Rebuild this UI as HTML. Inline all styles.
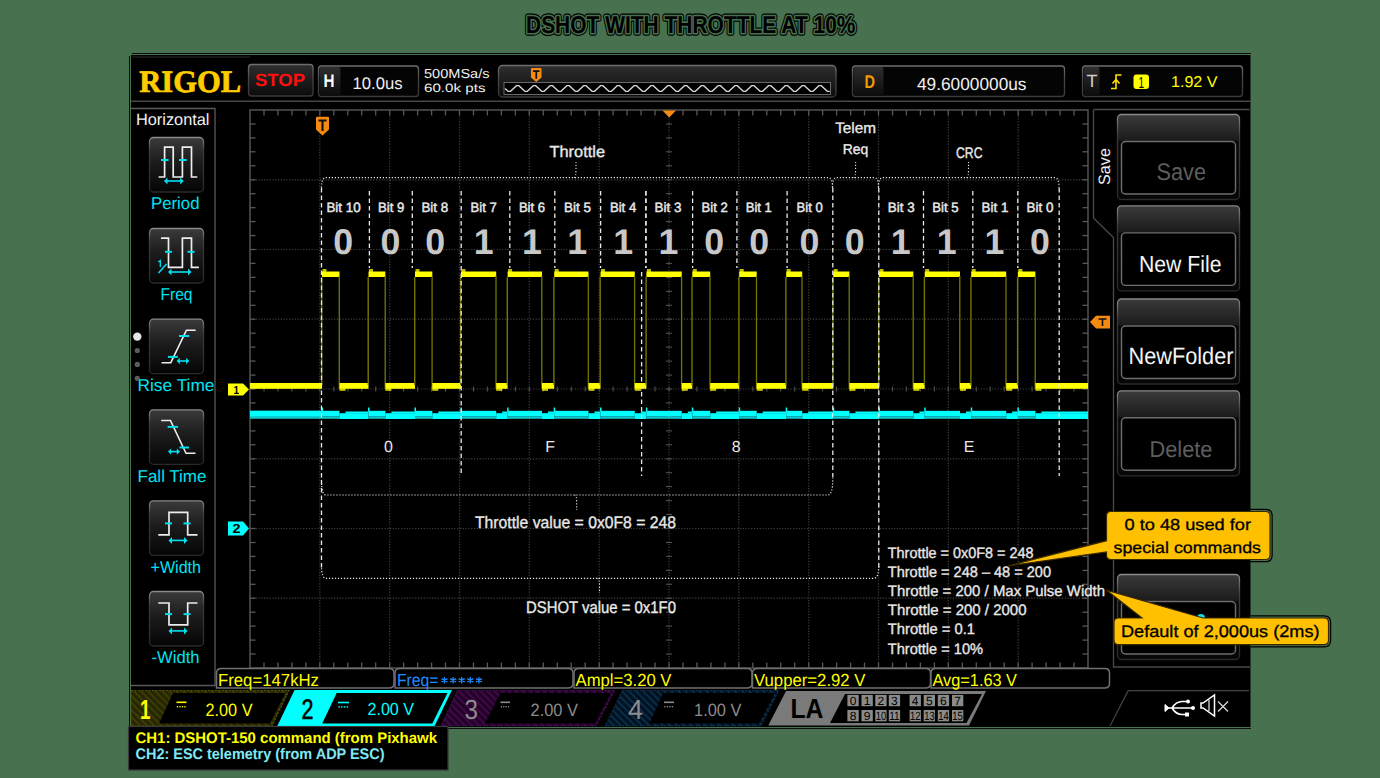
<!DOCTYPE html>
<html><head><meta charset="utf-8"><style>
html,body{margin:0;padding:0;background:#48724F;width:1380px;height:778px;overflow:hidden;}
svg{display:block;position:absolute;left:0;top:0;}
</style></head><body>
<svg width="1380" height="778" viewBox="0 0 1380 778" text-rendering="geometricPrecision">
<defs>
<clipPath id="outside"><rect x="1250.5" y="0" width="130" height="778"/></clipPath>
<linearGradient id="btn" x1="0" y1="0" x2="0" y2="1"><stop offset="0" stop-color="#3a3a3a"/><stop offset="0.45" stop-color="#1c1c1c"/><stop offset="1" stop-color="#050505"/></linearGradient>
<linearGradient id="bar" x1="0" y1="0" x2="0" y2="1"><stop offset="0" stop-color="#2e2e2e"/><stop offset="1" stop-color="#0c0c0c"/></linearGradient>
<linearGradient id="mbtn" x1="0" y1="0" x2="0" y2="1"><stop offset="0" stop-color="#3a3a3a"/><stop offset="0.3" stop-color="#1c1c1c"/><stop offset="0.32" stop-color="#0a0a0a"/><stop offset="1" stop-color="#060606"/></linearGradient>
<linearGradient id="tstroke" x1="0" y1="0" x2="0" y2="1"><stop offset="0" stop-color="#6e6e6e"/><stop offset="0.5" stop-color="#444"/><stop offset="1" stop-color="#3a3a3a"/></linearGradient>
<linearGradient id="mstroke" x1="0" y1="0" x2="0" y2="1"><stop offset="0" stop-color="#8a8a8a"/><stop offset="0.25" stop-color="#3a3a3a"/><stop offset="1" stop-color="#2a2a2a"/></linearGradient>
<pattern id="hatchY" width="5" height="5" patternUnits="userSpaceOnUse" patternTransform="rotate(-45)"><rect width="5" height="5" fill="#262600"/><rect width="1.8" height="5" fill="#3e3e06"/></pattern>
<pattern id="hatchP" width="5" height="5" patternUnits="userSpaceOnUse" patternTransform="rotate(-45)"><rect width="5" height="5" fill="#240028"/><rect width="1.8" height="5" fill="#3e0c48"/></pattern>
<pattern id="hatchB" width="5" height="5" patternUnits="userSpaceOnUse" patternTransform="rotate(-45)"><rect width="5" height="5" fill="#00121f"/><rect width="1.8" height="5" fill="#0a2e4a"/></pattern>
</defs>
<text x="526.00" y="33.00" font-family='"Liberation Sans", sans-serif' font-size="24.27" font-weight="bold" fill="none" textLength="329.50" lengthAdjust="spacingAndGlyphs" stroke="#000" stroke-width="5.4" stroke-linejoin="round">DSHOT WITH THROTTLE AT 10%</text>
<text x="526.00" y="33.00" font-family='"Liberation Sans", sans-serif' font-size="24.27" font-weight="bold" fill="none" textLength="329.50" lengthAdjust="spacingAndGlyphs" stroke="#48724F" stroke-width="3.2" stroke-linejoin="round">DSHOT WITH THROTTLE AT 10%</text>
<text x="526.00" y="33.00" font-family='"Liberation Sans", sans-serif' font-size="24.27" font-weight="bold" fill="#000" textLength="329.50" lengthAdjust="spacingAndGlyphs" >DSHOT WITH THROTTLE AT 10%</text>
<rect x="132" y="53" width="1119" height="1" rx="0" fill="#0a0a0a" />
<rect x="129" y="56" width="1" height="671" rx="0" fill="#0a0a0a" />
<rect x="131" y="55" width="1119.5" height="672" rx="0" fill="#000" />
<rect x="132" y="728" width="1119" height="1" rx="0" fill="#111" />
<rect x="132" y="56.5" width="118" height="1" rx="0" fill="#2a2a2a" />
<rect x="131" y="100.5" width="1120" height="1.5" rx="0" fill="#474747" />
<text x="139.30" y="91.70" font-family='"Liberation Serif", serif' font-size="31.15" font-weight="bold" fill="#FFCC00" textLength="101.90" lengthAdjust="spacingAndGlyphs" stroke="#FFCC00" stroke-width="0.7" >RIGOL</text>
<rect x="248.5" y="64.5" width="64.5" height="31.5" rx="3" fill="url(#bar)" stroke="url(#tstroke)" stroke-width="1.3" />
<text x="255.00" y="86.00" font-family='"Liberation Sans", sans-serif' font-size="17.73" font-weight="bold" fill="#FF1010" textLength="50.00" lengthAdjust="spacingAndGlyphs" >STOP</text>
<rect x="318.5" y="66" width="100" height="30.5" rx="3" fill="#040404" stroke="url(#tstroke)" stroke-width="1.3" />
<rect x="319.5" y="67" width="21" height="28.5" rx="2" fill="url(#bar)" />
<text x="323.50" y="87.20" font-family='"Liberation Sans", sans-serif' font-size="18.02" font-weight="bold" fill="#fff" textLength="11.00" lengthAdjust="spacingAndGlyphs" >H</text>
<text x="352.50" y="88.80" font-family='"Liberation Sans", sans-serif' font-size="16.72" font-weight="normal" fill="#f0f0f0" textLength="50.00" lengthAdjust="spacingAndGlyphs" >10.0us</text>
<text x="424.00" y="78.30" font-family='"Liberation Sans", sans-serif' font-size="13.08" font-weight="normal" fill="#f0f0f0" textLength="65.50" lengthAdjust="spacingAndGlyphs" >500MSa/s</text>
<text x="424.00" y="92.30" font-family='"Liberation Sans", sans-serif' font-size="12.06" font-weight="normal" fill="#f0f0f0" textLength="61.50" lengthAdjust="spacingAndGlyphs" >60.0k pts</text>
<rect x="498.5" y="65.5" width="337.5" height="31.5" rx="4" fill="url(#bar)" stroke="url(#tstroke)" stroke-width="1.3" />
<rect x="504" y="82.5" width="326.5" height="12" rx="0" fill="#000" stroke="#6a6a6a" stroke-width="1" />
<path d="M505.0,88.5 L508.1,91.3 L510.5,91.3 L516.5,85.7 L518.9,85.7 L524.9,91.3 L527.3,91.3 L533.3,85.7 L535.7,85.7 L541.7,91.3 L544.1,91.3 L550.1,85.7 L552.5,85.7 L558.5,91.3 L560.9,91.3 L566.9,85.7 L569.3,85.7 L575.3,91.3 L577.7,91.3 L583.7,85.7 L586.1,85.7 L592.1,91.3 L594.5,91.3 L600.5,85.7 L602.9,85.7 L608.9,91.3 L611.3,91.3 L617.3,85.7 L619.7,85.7 L625.7,91.3 L628.1,91.3 L634.1,85.7 L636.5,85.7 L642.5,91.3 L644.9,91.3 L650.9,85.7 L653.3,85.7 L659.3,91.3 L661.7,91.3 L667.7,85.7 L670.1,85.7 L676.1,91.3 L678.5,91.3 L684.5,85.7 L686.9,85.7 L692.9,91.3 L695.3,91.3 L701.3,85.7 L703.7,85.7 L709.7,91.3 L712.1,91.3 L718.1,85.7 L720.5,85.7 L726.5,91.3 L728.9,91.3 L734.9,85.7 L737.3,85.7 L743.3,91.3 L745.7,91.3 L751.7,85.7 L754.1,85.7 L760.1,91.3 L762.5,91.3 L768.5,85.7 L770.9,85.7 L776.9,91.3 L779.3,91.3 L785.3,85.7 L787.7,85.7 L793.7,91.3 L796.1,91.3 L802.1,85.7 L804.5,85.7 L810.5,91.3 L812.9,91.3 L818.9,85.7 L821.3,85.7 L827.3,91.3 L829.7,91.3" fill="none" stroke="#d8d8d8" stroke-width="1.3" />
<path d="M531,69 Q531,68 532,68 L540.5,68 Q541.5,68 541.5,69 L541.5,77.52 L536.25,82 L531,77.52 Z" fill="#F58A10" />
<path d="M533.00,71.10 L539.50,71.10 M536.25,71.10 L536.25,78.78" fill="none" stroke="#111" stroke-width="1.68" />
<rect x="852.5" y="66" width="212" height="30.5" rx="3" fill="#040404" stroke="url(#tstroke)" stroke-width="1.3" />
<rect x="853.5" y="67" width="30" height="28.5" rx="2" fill="url(#bar)" />
<text x="864.50" y="87.50" font-family='"Liberation Sans", sans-serif' font-size="18.46" font-weight="bold" fill="#F59A00" textLength="10.50" lengthAdjust="spacingAndGlyphs" >D</text>
<text x="917.00" y="89.50" font-family='"Liberation Sans", sans-serif' font-size="17.44" font-weight="normal" fill="#f0f0f0" textLength="109.50" lengthAdjust="spacingAndGlyphs" >49.6000000us</text>
<rect x="1082.5" y="66" width="160" height="30.5" rx="3" fill="#040404" stroke="url(#tstroke)" stroke-width="1.3" />
<rect x="1083.5" y="67" width="16" height="28.5" rx="2" fill="url(#bar)" />
<text x="1086.50" y="87.00" font-family='"Liberation Sans", sans-serif' font-size="17.73" font-weight="normal" fill="#cfcfcf" textLength="11.00" lengthAdjust="spacingAndGlyphs" >T</text>
<path d="M1111,88.5 L1116,88.5 L1116,75 L1121.5,75 M1112.5,83.5 L1116,79.5 L1119.5,83.5" fill="none" stroke="#FFE000" stroke-width="1.6" />
<rect x="1133.5" y="74.5" width="15.5" height="14.5" rx="3" fill="#FFFF00" />
<text x="1138.50" y="87.50" font-family='"Liberation Sans", sans-serif' font-size="15.99" font-weight="normal" fill="#000" textLength="5.50" lengthAdjust="spacingAndGlyphs" >1</text>
<text x="1171.00" y="87.30" font-family='"Liberation Sans", sans-serif' font-size="15.70" font-weight="normal" fill="#FFFF00" textLength="46.50" lengthAdjust="spacingAndGlyphs" >1.92 V</text>
<path d="M131,108.5 L215,108.5 L215,685.5 L131,685.5" fill="none" stroke="#5a5a5a" stroke-width="1.3" />
<text x="136.00" y="125.30" font-family='"Liberation Sans", sans-serif' font-size="16.42" font-weight="normal" fill="#f2f2f2" textLength="73.50" lengthAdjust="spacingAndGlyphs" >Horizontal</text>
<rect x="149.5" y="137.5" width="54" height="54.5" rx="4" fill="url(#btn)" stroke="url(#mstroke)" stroke-width="1.3" />
<text x="151.00" y="209.30" font-family='"Liberation Sans", sans-serif' font-size="17.15" font-weight="normal" fill="#00E4F4" textLength="48.50" lengthAdjust="spacingAndGlyphs" >Period</text>
<rect x="149.5" y="228.5" width="54" height="54.5" rx="4" fill="url(#btn)" stroke="url(#mstroke)" stroke-width="1.3" />
<text x="160.50" y="300.30" font-family='"Liberation Sans", sans-serif' font-size="17.15" font-weight="normal" fill="#00E4F4" textLength="32.00" lengthAdjust="spacingAndGlyphs" >Freq</text>
<rect x="149.5" y="319.2" width="54" height="54.5" rx="4" fill="url(#btn)" stroke="url(#mstroke)" stroke-width="1.3" />
<text x="137.50" y="391.00" font-family='"Liberation Sans", sans-serif' font-size="17.15" font-weight="normal" fill="#00E4F4" textLength="77.00" lengthAdjust="spacingAndGlyphs" >Rise Time</text>
<rect x="149.5" y="409.8" width="54" height="54.5" rx="4" fill="url(#btn)" stroke="url(#mstroke)" stroke-width="1.3" />
<text x="137.50" y="481.60" font-family='"Liberation Sans", sans-serif' font-size="17.15" font-weight="normal" fill="#00E4F4" textLength="69.00" lengthAdjust="spacingAndGlyphs" >Fall Time</text>
<rect x="149.5" y="500.9" width="54" height="54.5" rx="4" fill="url(#btn)" stroke="url(#mstroke)" stroke-width="1.3" />
<text x="150.50" y="572.70" font-family='"Liberation Sans", sans-serif' font-size="17.15" font-weight="normal" fill="#00E4F4" textLength="50.50" lengthAdjust="spacingAndGlyphs" >+Width</text>
<rect x="149.5" y="591.5" width="54" height="54.5" rx="4" fill="url(#btn)" stroke="url(#mstroke)" stroke-width="1.3" />
<text x="151.50" y="663.30" font-family='"Liberation Sans", sans-serif' font-size="17.15" font-weight="normal" fill="#00E4F4" textLength="48.00" lengthAdjust="spacingAndGlyphs" >-Width</text>
<path d="M158.6,177 L164.6,177 L164.6,147.2 L173.2,147.2 L173.2,177 L182.4,177 L182.4,147.2 L191.5,147.2 L191.5,177 L197.3,177" fill="none" stroke="#ededed" stroke-width="1.7" />
<line x1="161" y1="160" x2="168.5" y2="160" stroke="#00E0F0" stroke-width="2" />
<line x1="179" y1="160" x2="186.6" y2="160" stroke="#00E0F0" stroke-width="2" />
<line x1="165.5" y1="181" x2="182.2" y2="181" stroke="#00E0F0" stroke-width="1.6" />
<path d="M164,181 L167.5,177.5 L167.5,184.5 Z" fill="#00E0F0" />
<path d="M183.7,181 L180.2,177.5 L180.2,184.5 Z" fill="#00E0F0" />
<path d="M161,238.2 L168.5,238.2 L168.5,267.4 L182.4,267.4 L182.4,238.2 L191.5,238.2 L191.5,267.4 L198.9,267.4" fill="none" stroke="#ededed" stroke-width="1.7" />
<line x1="165" y1="251.8" x2="172" y2="251.8" stroke="#00E0F0" stroke-width="2" />
<line x1="187.5" y1="251.8" x2="194.5" y2="251.8" stroke="#00E0F0" stroke-width="2" />
<line x1="169.5" y1="272" x2="190.0" y2="272" stroke="#00E0F0" stroke-width="1.6" />
<path d="M168,272 L171.5,268.5 L171.5,275.5 Z" fill="#00E0F0" />
<path d="M191.5,272 L188.0,268.5 L188.0,275.5 Z" fill="#00E0F0" />
<path d="M158.5,273 L166.5,264" fill="none" stroke="#00E0F0" stroke-width="1.5" />
<path d="M158.3,262 L160.3,260.5 L160.3,267" fill="none" stroke="#00E0F0" stroke-width="1.3" />
<path d="M161.6,362.7 L170.8,362.7 L186.4,330.3 L195.7,330.3" fill="none" stroke="#ededed" stroke-width="1.5" />
<line x1="179" y1="336.0" x2="189.3" y2="336.0" stroke="#00E0F0" stroke-width="2" />
<line x1="168" y1="356.9" x2="177.8" y2="356.9" stroke="#00E0F0" stroke-width="2" />
<line x1="178.1" y1="361.0" x2="187.8" y2="361.0" stroke="#00E0F0" stroke-width="1.6" />
<path d="M176.6,361.0 L179.79999999999998,357.8 L179.79999999999998,364.2 Z" fill="#00E0F0" />
<path d="M189.3,361.0 L186.10000000000002,357.8 L186.10000000000002,364.2 Z" fill="#00E0F0" />
<path d="M161.2,420.6 L170.5,420.6 L186,453.3 L195.5,453.3" fill="none" stroke="#ededed" stroke-width="1.5" />
<line x1="167.6" y1="426.90000000000003" x2="178" y2="426.90000000000003" stroke="#00E0F0" stroke-width="2" />
<line x1="179.5" y1="447.5" x2="189" y2="447.5" stroke="#00E0F0" stroke-width="2" />
<line x1="169.5" y1="451.6" x2="178.5" y2="451.6" stroke="#00E0F0" stroke-width="1.6" />
<path d="M168,451.6 L171.2,448.40000000000003 L171.2,454.8 Z" fill="#00E0F0" />
<path d="M180,451.6 L176.8,448.40000000000003 L176.8,454.8 Z" fill="#00E0F0" />
<path d="M158.3,534.9 L169,534.9 L169,512.4 L187.7,512.4 L187.7,534.9 L197.5,534.9" fill="none" stroke="#ededed" stroke-width="1.7" />
<line x1="165" y1="523.4" x2="172" y2="523.4" stroke="#00E0F0" stroke-width="2" />
<line x1="183.5" y1="523.4" x2="190.5" y2="523.4" stroke="#00E0F0" stroke-width="2" />
<line x1="170.0" y1="540.4" x2="186.0" y2="540.4" stroke="#00E0F0" stroke-width="1.6" />
<path d="M168.5,540.4 L172.0,536.9 L172.0,543.9 Z" fill="#00E0F0" />
<path d="M187.5,540.4 L184.0,536.9 L184.0,543.9 Z" fill="#00E0F0" />
<path d="M158.3,603 L169,603 L169,624.8 L187.7,624.8 L187.7,603 L197.5,603" fill="none" stroke="#ededed" stroke-width="1.7" />
<line x1="165" y1="614.1" x2="172" y2="614.1" stroke="#00E0F0" stroke-width="2" />
<line x1="183.5" y1="614.1" x2="190.5" y2="614.1" stroke="#00E0F0" stroke-width="2" />
<line x1="170.0" y1="630.9" x2="186.0" y2="630.9" stroke="#00E0F0" stroke-width="1.6" />
<path d="M168.5,630.9 L172.0,627.4 L172.0,634.4 Z" fill="#00E0F0" />
<path d="M187.5,630.9 L184.0,627.4 L184.0,634.4 Z" fill="#00E0F0" />
<circle cx="137.3" cy="336.6" r="4.2" fill="#e6e6e6"/>
<circle cx="137.3" cy="350.5" r="2.6" fill="#5c5c5c"/>
<circle cx="137.3" cy="364.4" r="2.6" fill="#5c5c5c"/>
<circle cx="137.3" cy="378.3" r="2.6" fill="#5c5c5c"/>
<line x1="319.8" y1="110" x2="319.8" y2="668" stroke="#404040" stroke-width="1.2" stroke-dasharray="1.2 1.6"/>
<line x1="389.7" y1="110" x2="389.7" y2="668" stroke="#404040" stroke-width="1.2" stroke-dasharray="1.2 1.6"/>
<line x1="459.5" y1="110" x2="459.5" y2="668" stroke="#404040" stroke-width="1.2" stroke-dasharray="1.2 1.6"/>
<line x1="529.3" y1="110" x2="529.3" y2="668" stroke="#404040" stroke-width="1.2" stroke-dasharray="1.2 1.6"/>
<line x1="599.2" y1="110" x2="599.2" y2="668" stroke="#404040" stroke-width="1.2" stroke-dasharray="1.2 1.6"/>
<line x1="669.0" y1="110" x2="669.0" y2="668" stroke="#404040" stroke-width="1.2" stroke-dasharray="1.2 1.6"/>
<line x1="738.8" y1="110" x2="738.8" y2="668" stroke="#404040" stroke-width="1.2" stroke-dasharray="1.2 1.6"/>
<line x1="808.7" y1="110" x2="808.7" y2="668" stroke="#404040" stroke-width="1.2" stroke-dasharray="1.2 1.6"/>
<line x1="878.5" y1="110" x2="878.5" y2="668" stroke="#404040" stroke-width="1.2" stroke-dasharray="1.2 1.6"/>
<line x1="948.3" y1="110" x2="948.3" y2="668" stroke="#404040" stroke-width="1.2" stroke-dasharray="1.2 1.6"/>
<line x1="1018.2" y1="110" x2="1018.2" y2="668" stroke="#404040" stroke-width="1.2" stroke-dasharray="1.2 1.6"/>
<line x1="250" y1="179.8" x2="1088" y2="179.8" stroke="#404040" stroke-width="1.2" stroke-dasharray="1.2 1.6"/>
<line x1="250" y1="249.5" x2="1088" y2="249.5" stroke="#404040" stroke-width="1.2" stroke-dasharray="1.2 1.6"/>
<line x1="250" y1="319.2" x2="1088" y2="319.2" stroke="#404040" stroke-width="1.2" stroke-dasharray="1.2 1.6"/>
<line x1="250" y1="389.0" x2="1088" y2="389.0" stroke="#404040" stroke-width="1.2" stroke-dasharray="1.2 1.6"/>
<line x1="250" y1="458.8" x2="1088" y2="458.8" stroke="#404040" stroke-width="1.2" stroke-dasharray="1.2 1.6"/>
<line x1="250" y1="528.5" x2="1088" y2="528.5" stroke="#404040" stroke-width="1.2" stroke-dasharray="1.2 1.6"/>
<line x1="250" y1="598.2" x2="1088" y2="598.2" stroke="#404040" stroke-width="1.2" stroke-dasharray="1.2 1.6"/>
<rect x="250" y="110" width="838" height="558" rx="0" fill="none" stroke="#585858" stroke-width="1.4" />
<line x1="264.0" y1="110" x2="264.0" y2="115.5" stroke="#585858" stroke-width="1.3" />
<line x1="264.0" y1="668" x2="264.0" y2="662.5" stroke="#585858" stroke-width="1.3" />
<line x1="277.9" y1="110" x2="277.9" y2="115.5" stroke="#585858" stroke-width="1.3" />
<line x1="277.9" y1="668" x2="277.9" y2="662.5" stroke="#585858" stroke-width="1.3" />
<line x1="291.9" y1="110" x2="291.9" y2="115.5" stroke="#585858" stroke-width="1.3" />
<line x1="291.9" y1="668" x2="291.9" y2="662.5" stroke="#585858" stroke-width="1.3" />
<line x1="305.9" y1="110" x2="305.9" y2="115.5" stroke="#585858" stroke-width="1.3" />
<line x1="305.9" y1="668" x2="305.9" y2="662.5" stroke="#585858" stroke-width="1.3" />
<line x1="319.8" y1="110" x2="319.8" y2="115.5" stroke="#585858" stroke-width="1.3" />
<line x1="319.8" y1="668" x2="319.8" y2="662.5" stroke="#585858" stroke-width="1.3" />
<line x1="333.8" y1="110" x2="333.8" y2="115.5" stroke="#585858" stroke-width="1.3" />
<line x1="333.8" y1="668" x2="333.8" y2="662.5" stroke="#585858" stroke-width="1.3" />
<line x1="347.8" y1="110" x2="347.8" y2="115.5" stroke="#585858" stroke-width="1.3" />
<line x1="347.8" y1="668" x2="347.8" y2="662.5" stroke="#585858" stroke-width="1.3" />
<line x1="361.7" y1="110" x2="361.7" y2="115.5" stroke="#585858" stroke-width="1.3" />
<line x1="361.7" y1="668" x2="361.7" y2="662.5" stroke="#585858" stroke-width="1.3" />
<line x1="375.7" y1="110" x2="375.7" y2="115.5" stroke="#585858" stroke-width="1.3" />
<line x1="375.7" y1="668" x2="375.7" y2="662.5" stroke="#585858" stroke-width="1.3" />
<line x1="389.7" y1="110" x2="389.7" y2="115.5" stroke="#585858" stroke-width="1.3" />
<line x1="389.7" y1="668" x2="389.7" y2="662.5" stroke="#585858" stroke-width="1.3" />
<line x1="403.6" y1="110" x2="403.6" y2="115.5" stroke="#585858" stroke-width="1.3" />
<line x1="403.6" y1="668" x2="403.6" y2="662.5" stroke="#585858" stroke-width="1.3" />
<line x1="417.6" y1="110" x2="417.6" y2="115.5" stroke="#585858" stroke-width="1.3" />
<line x1="417.6" y1="668" x2="417.6" y2="662.5" stroke="#585858" stroke-width="1.3" />
<line x1="431.6" y1="110" x2="431.6" y2="115.5" stroke="#585858" stroke-width="1.3" />
<line x1="431.6" y1="668" x2="431.6" y2="662.5" stroke="#585858" stroke-width="1.3" />
<line x1="445.5" y1="110" x2="445.5" y2="115.5" stroke="#585858" stroke-width="1.3" />
<line x1="445.5" y1="668" x2="445.5" y2="662.5" stroke="#585858" stroke-width="1.3" />
<line x1="459.5" y1="110" x2="459.5" y2="115.5" stroke="#585858" stroke-width="1.3" />
<line x1="459.5" y1="668" x2="459.5" y2="662.5" stroke="#585858" stroke-width="1.3" />
<line x1="473.5" y1="110" x2="473.5" y2="115.5" stroke="#585858" stroke-width="1.3" />
<line x1="473.5" y1="668" x2="473.5" y2="662.5" stroke="#585858" stroke-width="1.3" />
<line x1="487.4" y1="110" x2="487.4" y2="115.5" stroke="#585858" stroke-width="1.3" />
<line x1="487.4" y1="668" x2="487.4" y2="662.5" stroke="#585858" stroke-width="1.3" />
<line x1="501.4" y1="110" x2="501.4" y2="115.5" stroke="#585858" stroke-width="1.3" />
<line x1="501.4" y1="668" x2="501.4" y2="662.5" stroke="#585858" stroke-width="1.3" />
<line x1="515.4" y1="110" x2="515.4" y2="115.5" stroke="#585858" stroke-width="1.3" />
<line x1="515.4" y1="668" x2="515.4" y2="662.5" stroke="#585858" stroke-width="1.3" />
<line x1="529.3" y1="110" x2="529.3" y2="115.5" stroke="#585858" stroke-width="1.3" />
<line x1="529.3" y1="668" x2="529.3" y2="662.5" stroke="#585858" stroke-width="1.3" />
<line x1="543.3" y1="110" x2="543.3" y2="115.5" stroke="#585858" stroke-width="1.3" />
<line x1="543.3" y1="668" x2="543.3" y2="662.5" stroke="#585858" stroke-width="1.3" />
<line x1="557.3" y1="110" x2="557.3" y2="115.5" stroke="#585858" stroke-width="1.3" />
<line x1="557.3" y1="668" x2="557.3" y2="662.5" stroke="#585858" stroke-width="1.3" />
<line x1="571.2" y1="110" x2="571.2" y2="115.5" stroke="#585858" stroke-width="1.3" />
<line x1="571.2" y1="668" x2="571.2" y2="662.5" stroke="#585858" stroke-width="1.3" />
<line x1="585.2" y1="110" x2="585.2" y2="115.5" stroke="#585858" stroke-width="1.3" />
<line x1="585.2" y1="668" x2="585.2" y2="662.5" stroke="#585858" stroke-width="1.3" />
<line x1="599.2" y1="110" x2="599.2" y2="115.5" stroke="#585858" stroke-width="1.3" />
<line x1="599.2" y1="668" x2="599.2" y2="662.5" stroke="#585858" stroke-width="1.3" />
<line x1="613.1" y1="110" x2="613.1" y2="115.5" stroke="#585858" stroke-width="1.3" />
<line x1="613.1" y1="668" x2="613.1" y2="662.5" stroke="#585858" stroke-width="1.3" />
<line x1="627.1" y1="110" x2="627.1" y2="115.5" stroke="#585858" stroke-width="1.3" />
<line x1="627.1" y1="668" x2="627.1" y2="662.5" stroke="#585858" stroke-width="1.3" />
<line x1="641.1" y1="110" x2="641.1" y2="115.5" stroke="#585858" stroke-width="1.3" />
<line x1="641.1" y1="668" x2="641.1" y2="662.5" stroke="#585858" stroke-width="1.3" />
<line x1="655.0" y1="110" x2="655.0" y2="115.5" stroke="#585858" stroke-width="1.3" />
<line x1="655.0" y1="668" x2="655.0" y2="662.5" stroke="#585858" stroke-width="1.3" />
<line x1="669.0" y1="110" x2="669.0" y2="115.5" stroke="#585858" stroke-width="1.3" />
<line x1="669.0" y1="668" x2="669.0" y2="662.5" stroke="#585858" stroke-width="1.3" />
<line x1="683.0" y1="110" x2="683.0" y2="115.5" stroke="#585858" stroke-width="1.3" />
<line x1="683.0" y1="668" x2="683.0" y2="662.5" stroke="#585858" stroke-width="1.3" />
<line x1="696.9" y1="110" x2="696.9" y2="115.5" stroke="#585858" stroke-width="1.3" />
<line x1="696.9" y1="668" x2="696.9" y2="662.5" stroke="#585858" stroke-width="1.3" />
<line x1="710.9" y1="110" x2="710.9" y2="115.5" stroke="#585858" stroke-width="1.3" />
<line x1="710.9" y1="668" x2="710.9" y2="662.5" stroke="#585858" stroke-width="1.3" />
<line x1="724.9" y1="110" x2="724.9" y2="115.5" stroke="#585858" stroke-width="1.3" />
<line x1="724.9" y1="668" x2="724.9" y2="662.5" stroke="#585858" stroke-width="1.3" />
<line x1="738.8" y1="110" x2="738.8" y2="115.5" stroke="#585858" stroke-width="1.3" />
<line x1="738.8" y1="668" x2="738.8" y2="662.5" stroke="#585858" stroke-width="1.3" />
<line x1="752.8" y1="110" x2="752.8" y2="115.5" stroke="#585858" stroke-width="1.3" />
<line x1="752.8" y1="668" x2="752.8" y2="662.5" stroke="#585858" stroke-width="1.3" />
<line x1="766.8" y1="110" x2="766.8" y2="115.5" stroke="#585858" stroke-width="1.3" />
<line x1="766.8" y1="668" x2="766.8" y2="662.5" stroke="#585858" stroke-width="1.3" />
<line x1="780.7" y1="110" x2="780.7" y2="115.5" stroke="#585858" stroke-width="1.3" />
<line x1="780.7" y1="668" x2="780.7" y2="662.5" stroke="#585858" stroke-width="1.3" />
<line x1="794.7" y1="110" x2="794.7" y2="115.5" stroke="#585858" stroke-width="1.3" />
<line x1="794.7" y1="668" x2="794.7" y2="662.5" stroke="#585858" stroke-width="1.3" />
<line x1="808.7" y1="110" x2="808.7" y2="115.5" stroke="#585858" stroke-width="1.3" />
<line x1="808.7" y1="668" x2="808.7" y2="662.5" stroke="#585858" stroke-width="1.3" />
<line x1="822.6" y1="110" x2="822.6" y2="115.5" stroke="#585858" stroke-width="1.3" />
<line x1="822.6" y1="668" x2="822.6" y2="662.5" stroke="#585858" stroke-width="1.3" />
<line x1="836.6" y1="110" x2="836.6" y2="115.5" stroke="#585858" stroke-width="1.3" />
<line x1="836.6" y1="668" x2="836.6" y2="662.5" stroke="#585858" stroke-width="1.3" />
<line x1="850.6" y1="110" x2="850.6" y2="115.5" stroke="#585858" stroke-width="1.3" />
<line x1="850.6" y1="668" x2="850.6" y2="662.5" stroke="#585858" stroke-width="1.3" />
<line x1="864.5" y1="110" x2="864.5" y2="115.5" stroke="#585858" stroke-width="1.3" />
<line x1="864.5" y1="668" x2="864.5" y2="662.5" stroke="#585858" stroke-width="1.3" />
<line x1="878.5" y1="110" x2="878.5" y2="115.5" stroke="#585858" stroke-width="1.3" />
<line x1="878.5" y1="668" x2="878.5" y2="662.5" stroke="#585858" stroke-width="1.3" />
<line x1="892.5" y1="110" x2="892.5" y2="115.5" stroke="#585858" stroke-width="1.3" />
<line x1="892.5" y1="668" x2="892.5" y2="662.5" stroke="#585858" stroke-width="1.3" />
<line x1="906.4" y1="110" x2="906.4" y2="115.5" stroke="#585858" stroke-width="1.3" />
<line x1="906.4" y1="668" x2="906.4" y2="662.5" stroke="#585858" stroke-width="1.3" />
<line x1="920.4" y1="110" x2="920.4" y2="115.5" stroke="#585858" stroke-width="1.3" />
<line x1="920.4" y1="668" x2="920.4" y2="662.5" stroke="#585858" stroke-width="1.3" />
<line x1="934.4" y1="110" x2="934.4" y2="115.5" stroke="#585858" stroke-width="1.3" />
<line x1="934.4" y1="668" x2="934.4" y2="662.5" stroke="#585858" stroke-width="1.3" />
<line x1="948.3" y1="110" x2="948.3" y2="115.5" stroke="#585858" stroke-width="1.3" />
<line x1="948.3" y1="668" x2="948.3" y2="662.5" stroke="#585858" stroke-width="1.3" />
<line x1="962.3" y1="110" x2="962.3" y2="115.5" stroke="#585858" stroke-width="1.3" />
<line x1="962.3" y1="668" x2="962.3" y2="662.5" stroke="#585858" stroke-width="1.3" />
<line x1="976.3" y1="110" x2="976.3" y2="115.5" stroke="#585858" stroke-width="1.3" />
<line x1="976.3" y1="668" x2="976.3" y2="662.5" stroke="#585858" stroke-width="1.3" />
<line x1="990.2" y1="110" x2="990.2" y2="115.5" stroke="#585858" stroke-width="1.3" />
<line x1="990.2" y1="668" x2="990.2" y2="662.5" stroke="#585858" stroke-width="1.3" />
<line x1="1004.2" y1="110" x2="1004.2" y2="115.5" stroke="#585858" stroke-width="1.3" />
<line x1="1004.2" y1="668" x2="1004.2" y2="662.5" stroke="#585858" stroke-width="1.3" />
<line x1="1018.2" y1="110" x2="1018.2" y2="115.5" stroke="#585858" stroke-width="1.3" />
<line x1="1018.2" y1="668" x2="1018.2" y2="662.5" stroke="#585858" stroke-width="1.3" />
<line x1="1032.1" y1="110" x2="1032.1" y2="115.5" stroke="#585858" stroke-width="1.3" />
<line x1="1032.1" y1="668" x2="1032.1" y2="662.5" stroke="#585858" stroke-width="1.3" />
<line x1="1046.1" y1="110" x2="1046.1" y2="115.5" stroke="#585858" stroke-width="1.3" />
<line x1="1046.1" y1="668" x2="1046.1" y2="662.5" stroke="#585858" stroke-width="1.3" />
<line x1="1060.1" y1="110" x2="1060.1" y2="115.5" stroke="#585858" stroke-width="1.3" />
<line x1="1060.1" y1="668" x2="1060.1" y2="662.5" stroke="#585858" stroke-width="1.3" />
<line x1="1074.0" y1="110" x2="1074.0" y2="115.5" stroke="#585858" stroke-width="1.3" />
<line x1="1074.0" y1="668" x2="1074.0" y2="662.5" stroke="#585858" stroke-width="1.3" />
<line x1="250" y1="124.0" x2="255.5" y2="124.0" stroke="#585858" stroke-width="1.3" />
<line x1="1088" y1="124.0" x2="1082.5" y2="124.0" stroke="#585858" stroke-width="1.3" />
<line x1="250" y1="137.9" x2="255.5" y2="137.9" stroke="#585858" stroke-width="1.3" />
<line x1="1088" y1="137.9" x2="1082.5" y2="137.9" stroke="#585858" stroke-width="1.3" />
<line x1="250" y1="151.8" x2="255.5" y2="151.8" stroke="#585858" stroke-width="1.3" />
<line x1="1088" y1="151.8" x2="1082.5" y2="151.8" stroke="#585858" stroke-width="1.3" />
<line x1="250" y1="165.8" x2="255.5" y2="165.8" stroke="#585858" stroke-width="1.3" />
<line x1="1088" y1="165.8" x2="1082.5" y2="165.8" stroke="#585858" stroke-width="1.3" />
<line x1="250" y1="179.8" x2="255.5" y2="179.8" stroke="#585858" stroke-width="1.3" />
<line x1="1088" y1="179.8" x2="1082.5" y2="179.8" stroke="#585858" stroke-width="1.3" />
<line x1="250" y1="193.7" x2="255.5" y2="193.7" stroke="#585858" stroke-width="1.3" />
<line x1="1088" y1="193.7" x2="1082.5" y2="193.7" stroke="#585858" stroke-width="1.3" />
<line x1="250" y1="207.7" x2="255.5" y2="207.7" stroke="#585858" stroke-width="1.3" />
<line x1="1088" y1="207.7" x2="1082.5" y2="207.7" stroke="#585858" stroke-width="1.3" />
<line x1="250" y1="221.6" x2="255.5" y2="221.6" stroke="#585858" stroke-width="1.3" />
<line x1="1088" y1="221.6" x2="1082.5" y2="221.6" stroke="#585858" stroke-width="1.3" />
<line x1="250" y1="235.6" x2="255.5" y2="235.6" stroke="#585858" stroke-width="1.3" />
<line x1="1088" y1="235.6" x2="1082.5" y2="235.6" stroke="#585858" stroke-width="1.3" />
<line x1="250" y1="249.5" x2="255.5" y2="249.5" stroke="#585858" stroke-width="1.3" />
<line x1="1088" y1="249.5" x2="1082.5" y2="249.5" stroke="#585858" stroke-width="1.3" />
<line x1="250" y1="263.4" x2="255.5" y2="263.4" stroke="#585858" stroke-width="1.3" />
<line x1="1088" y1="263.4" x2="1082.5" y2="263.4" stroke="#585858" stroke-width="1.3" />
<line x1="250" y1="277.4" x2="255.5" y2="277.4" stroke="#585858" stroke-width="1.3" />
<line x1="1088" y1="277.4" x2="1082.5" y2="277.4" stroke="#585858" stroke-width="1.3" />
<line x1="250" y1="291.4" x2="255.5" y2="291.4" stroke="#585858" stroke-width="1.3" />
<line x1="1088" y1="291.4" x2="1082.5" y2="291.4" stroke="#585858" stroke-width="1.3" />
<line x1="250" y1="305.3" x2="255.5" y2="305.3" stroke="#585858" stroke-width="1.3" />
<line x1="1088" y1="305.3" x2="1082.5" y2="305.3" stroke="#585858" stroke-width="1.3" />
<line x1="250" y1="319.2" x2="255.5" y2="319.2" stroke="#585858" stroke-width="1.3" />
<line x1="1088" y1="319.2" x2="1082.5" y2="319.2" stroke="#585858" stroke-width="1.3" />
<line x1="250" y1="333.2" x2="255.5" y2="333.2" stroke="#585858" stroke-width="1.3" />
<line x1="1088" y1="333.2" x2="1082.5" y2="333.2" stroke="#585858" stroke-width="1.3" />
<line x1="250" y1="347.1" x2="255.5" y2="347.1" stroke="#585858" stroke-width="1.3" />
<line x1="1088" y1="347.1" x2="1082.5" y2="347.1" stroke="#585858" stroke-width="1.3" />
<line x1="250" y1="361.1" x2="255.5" y2="361.1" stroke="#585858" stroke-width="1.3" />
<line x1="1088" y1="361.1" x2="1082.5" y2="361.1" stroke="#585858" stroke-width="1.3" />
<line x1="250" y1="375.1" x2="255.5" y2="375.1" stroke="#585858" stroke-width="1.3" />
<line x1="1088" y1="375.1" x2="1082.5" y2="375.1" stroke="#585858" stroke-width="1.3" />
<line x1="250" y1="389.0" x2="255.5" y2="389.0" stroke="#585858" stroke-width="1.3" />
<line x1="1088" y1="389.0" x2="1082.5" y2="389.0" stroke="#585858" stroke-width="1.3" />
<line x1="250" y1="402.9" x2="255.5" y2="402.9" stroke="#585858" stroke-width="1.3" />
<line x1="1088" y1="402.9" x2="1082.5" y2="402.9" stroke="#585858" stroke-width="1.3" />
<line x1="250" y1="416.9" x2="255.5" y2="416.9" stroke="#585858" stroke-width="1.3" />
<line x1="1088" y1="416.9" x2="1082.5" y2="416.9" stroke="#585858" stroke-width="1.3" />
<line x1="250" y1="430.9" x2="255.5" y2="430.9" stroke="#585858" stroke-width="1.3" />
<line x1="1088" y1="430.9" x2="1082.5" y2="430.9" stroke="#585858" stroke-width="1.3" />
<line x1="250" y1="444.8" x2="255.5" y2="444.8" stroke="#585858" stroke-width="1.3" />
<line x1="1088" y1="444.8" x2="1082.5" y2="444.8" stroke="#585858" stroke-width="1.3" />
<line x1="250" y1="458.8" x2="255.5" y2="458.8" stroke="#585858" stroke-width="1.3" />
<line x1="1088" y1="458.8" x2="1082.5" y2="458.8" stroke="#585858" stroke-width="1.3" />
<line x1="250" y1="472.7" x2="255.5" y2="472.7" stroke="#585858" stroke-width="1.3" />
<line x1="1088" y1="472.7" x2="1082.5" y2="472.7" stroke="#585858" stroke-width="1.3" />
<line x1="250" y1="486.6" x2="255.5" y2="486.6" stroke="#585858" stroke-width="1.3" />
<line x1="1088" y1="486.6" x2="1082.5" y2="486.6" stroke="#585858" stroke-width="1.3" />
<line x1="250" y1="500.6" x2="255.5" y2="500.6" stroke="#585858" stroke-width="1.3" />
<line x1="1088" y1="500.6" x2="1082.5" y2="500.6" stroke="#585858" stroke-width="1.3" />
<line x1="250" y1="514.5" x2="255.5" y2="514.5" stroke="#585858" stroke-width="1.3" />
<line x1="1088" y1="514.5" x2="1082.5" y2="514.5" stroke="#585858" stroke-width="1.3" />
<line x1="250" y1="528.5" x2="255.5" y2="528.5" stroke="#585858" stroke-width="1.3" />
<line x1="1088" y1="528.5" x2="1082.5" y2="528.5" stroke="#585858" stroke-width="1.3" />
<line x1="250" y1="542.5" x2="255.5" y2="542.5" stroke="#585858" stroke-width="1.3" />
<line x1="1088" y1="542.5" x2="1082.5" y2="542.5" stroke="#585858" stroke-width="1.3" />
<line x1="250" y1="556.4" x2="255.5" y2="556.4" stroke="#585858" stroke-width="1.3" />
<line x1="1088" y1="556.4" x2="1082.5" y2="556.4" stroke="#585858" stroke-width="1.3" />
<line x1="250" y1="570.4" x2="255.5" y2="570.4" stroke="#585858" stroke-width="1.3" />
<line x1="1088" y1="570.4" x2="1082.5" y2="570.4" stroke="#585858" stroke-width="1.3" />
<line x1="250" y1="584.3" x2="255.5" y2="584.3" stroke="#585858" stroke-width="1.3" />
<line x1="1088" y1="584.3" x2="1082.5" y2="584.3" stroke="#585858" stroke-width="1.3" />
<line x1="250" y1="598.2" x2="255.5" y2="598.2" stroke="#585858" stroke-width="1.3" />
<line x1="1088" y1="598.2" x2="1082.5" y2="598.2" stroke="#585858" stroke-width="1.3" />
<line x1="250" y1="612.2" x2="255.5" y2="612.2" stroke="#585858" stroke-width="1.3" />
<line x1="1088" y1="612.2" x2="1082.5" y2="612.2" stroke="#585858" stroke-width="1.3" />
<line x1="250" y1="626.1" x2="255.5" y2="626.1" stroke="#585858" stroke-width="1.3" />
<line x1="1088" y1="626.1" x2="1082.5" y2="626.1" stroke="#585858" stroke-width="1.3" />
<line x1="250" y1="640.1" x2="255.5" y2="640.1" stroke="#585858" stroke-width="1.3" />
<line x1="1088" y1="640.1" x2="1082.5" y2="640.1" stroke="#585858" stroke-width="1.3" />
<line x1="250" y1="654.0" x2="255.5" y2="654.0" stroke="#585858" stroke-width="1.3" />
<line x1="1088" y1="654.0" x2="1082.5" y2="654.0" stroke="#585858" stroke-width="1.3" />
<line x1="264.0" y1="386.5" x2="264.0" y2="391.5" stroke="#505050" stroke-width="1.1" />
<line x1="277.9" y1="386.5" x2="277.9" y2="391.5" stroke="#505050" stroke-width="1.1" />
<line x1="291.9" y1="386.5" x2="291.9" y2="391.5" stroke="#505050" stroke-width="1.1" />
<line x1="305.9" y1="386.5" x2="305.9" y2="391.5" stroke="#505050" stroke-width="1.1" />
<line x1="319.8" y1="386.5" x2="319.8" y2="391.5" stroke="#505050" stroke-width="1.1" />
<line x1="333.8" y1="386.5" x2="333.8" y2="391.5" stroke="#505050" stroke-width="1.1" />
<line x1="347.8" y1="386.5" x2="347.8" y2="391.5" stroke="#505050" stroke-width="1.1" />
<line x1="361.7" y1="386.5" x2="361.7" y2="391.5" stroke="#505050" stroke-width="1.1" />
<line x1="375.7" y1="386.5" x2="375.7" y2="391.5" stroke="#505050" stroke-width="1.1" />
<line x1="389.7" y1="386.5" x2="389.7" y2="391.5" stroke="#505050" stroke-width="1.1" />
<line x1="403.6" y1="386.5" x2="403.6" y2="391.5" stroke="#505050" stroke-width="1.1" />
<line x1="417.6" y1="386.5" x2="417.6" y2="391.5" stroke="#505050" stroke-width="1.1" />
<line x1="431.6" y1="386.5" x2="431.6" y2="391.5" stroke="#505050" stroke-width="1.1" />
<line x1="445.5" y1="386.5" x2="445.5" y2="391.5" stroke="#505050" stroke-width="1.1" />
<line x1="459.5" y1="386.5" x2="459.5" y2="391.5" stroke="#505050" stroke-width="1.1" />
<line x1="473.5" y1="386.5" x2="473.5" y2="391.5" stroke="#505050" stroke-width="1.1" />
<line x1="487.4" y1="386.5" x2="487.4" y2="391.5" stroke="#505050" stroke-width="1.1" />
<line x1="501.4" y1="386.5" x2="501.4" y2="391.5" stroke="#505050" stroke-width="1.1" />
<line x1="515.4" y1="386.5" x2="515.4" y2="391.5" stroke="#505050" stroke-width="1.1" />
<line x1="529.3" y1="386.5" x2="529.3" y2="391.5" stroke="#505050" stroke-width="1.1" />
<line x1="543.3" y1="386.5" x2="543.3" y2="391.5" stroke="#505050" stroke-width="1.1" />
<line x1="557.3" y1="386.5" x2="557.3" y2="391.5" stroke="#505050" stroke-width="1.1" />
<line x1="571.2" y1="386.5" x2="571.2" y2="391.5" stroke="#505050" stroke-width="1.1" />
<line x1="585.2" y1="386.5" x2="585.2" y2="391.5" stroke="#505050" stroke-width="1.1" />
<line x1="599.2" y1="386.5" x2="599.2" y2="391.5" stroke="#505050" stroke-width="1.1" />
<line x1="613.1" y1="386.5" x2="613.1" y2="391.5" stroke="#505050" stroke-width="1.1" />
<line x1="627.1" y1="386.5" x2="627.1" y2="391.5" stroke="#505050" stroke-width="1.1" />
<line x1="641.1" y1="386.5" x2="641.1" y2="391.5" stroke="#505050" stroke-width="1.1" />
<line x1="655.0" y1="386.5" x2="655.0" y2="391.5" stroke="#505050" stroke-width="1.1" />
<line x1="669.0" y1="386.5" x2="669.0" y2="391.5" stroke="#505050" stroke-width="1.1" />
<line x1="683.0" y1="386.5" x2="683.0" y2="391.5" stroke="#505050" stroke-width="1.1" />
<line x1="696.9" y1="386.5" x2="696.9" y2="391.5" stroke="#505050" stroke-width="1.1" />
<line x1="710.9" y1="386.5" x2="710.9" y2="391.5" stroke="#505050" stroke-width="1.1" />
<line x1="724.9" y1="386.5" x2="724.9" y2="391.5" stroke="#505050" stroke-width="1.1" />
<line x1="738.8" y1="386.5" x2="738.8" y2="391.5" stroke="#505050" stroke-width="1.1" />
<line x1="752.8" y1="386.5" x2="752.8" y2="391.5" stroke="#505050" stroke-width="1.1" />
<line x1="766.8" y1="386.5" x2="766.8" y2="391.5" stroke="#505050" stroke-width="1.1" />
<line x1="780.7" y1="386.5" x2="780.7" y2="391.5" stroke="#505050" stroke-width="1.1" />
<line x1="794.7" y1="386.5" x2="794.7" y2="391.5" stroke="#505050" stroke-width="1.1" />
<line x1="808.7" y1="386.5" x2="808.7" y2="391.5" stroke="#505050" stroke-width="1.1" />
<line x1="822.6" y1="386.5" x2="822.6" y2="391.5" stroke="#505050" stroke-width="1.1" />
<line x1="836.6" y1="386.5" x2="836.6" y2="391.5" stroke="#505050" stroke-width="1.1" />
<line x1="850.6" y1="386.5" x2="850.6" y2="391.5" stroke="#505050" stroke-width="1.1" />
<line x1="864.5" y1="386.5" x2="864.5" y2="391.5" stroke="#505050" stroke-width="1.1" />
<line x1="878.5" y1="386.5" x2="878.5" y2="391.5" stroke="#505050" stroke-width="1.1" />
<line x1="892.5" y1="386.5" x2="892.5" y2="391.5" stroke="#505050" stroke-width="1.1" />
<line x1="906.4" y1="386.5" x2="906.4" y2="391.5" stroke="#505050" stroke-width="1.1" />
<line x1="920.4" y1="386.5" x2="920.4" y2="391.5" stroke="#505050" stroke-width="1.1" />
<line x1="934.4" y1="386.5" x2="934.4" y2="391.5" stroke="#505050" stroke-width="1.1" />
<line x1="948.3" y1="386.5" x2="948.3" y2="391.5" stroke="#505050" stroke-width="1.1" />
<line x1="962.3" y1="386.5" x2="962.3" y2="391.5" stroke="#505050" stroke-width="1.1" />
<line x1="976.3" y1="386.5" x2="976.3" y2="391.5" stroke="#505050" stroke-width="1.1" />
<line x1="990.2" y1="386.5" x2="990.2" y2="391.5" stroke="#505050" stroke-width="1.1" />
<line x1="1004.2" y1="386.5" x2="1004.2" y2="391.5" stroke="#505050" stroke-width="1.1" />
<line x1="1018.2" y1="386.5" x2="1018.2" y2="391.5" stroke="#505050" stroke-width="1.1" />
<line x1="1032.1" y1="386.5" x2="1032.1" y2="391.5" stroke="#505050" stroke-width="1.1" />
<line x1="1046.1" y1="386.5" x2="1046.1" y2="391.5" stroke="#505050" stroke-width="1.1" />
<line x1="1060.1" y1="386.5" x2="1060.1" y2="391.5" stroke="#505050" stroke-width="1.1" />
<line x1="1074.0" y1="386.5" x2="1074.0" y2="391.5" stroke="#505050" stroke-width="1.1" />
<line x1="666.0" y1="124.0" x2="672.0" y2="124.0" stroke="#505050" stroke-width="1.1" />
<line x1="666.0" y1="137.9" x2="672.0" y2="137.9" stroke="#505050" stroke-width="1.1" />
<line x1="666.0" y1="151.8" x2="672.0" y2="151.8" stroke="#505050" stroke-width="1.1" />
<line x1="666.0" y1="165.8" x2="672.0" y2="165.8" stroke="#505050" stroke-width="1.1" />
<line x1="666.0" y1="179.8" x2="672.0" y2="179.8" stroke="#505050" stroke-width="1.1" />
<line x1="666.0" y1="193.7" x2="672.0" y2="193.7" stroke="#505050" stroke-width="1.1" />
<line x1="666.0" y1="207.7" x2="672.0" y2="207.7" stroke="#505050" stroke-width="1.1" />
<line x1="666.0" y1="221.6" x2="672.0" y2="221.6" stroke="#505050" stroke-width="1.1" />
<line x1="666.0" y1="235.6" x2="672.0" y2="235.6" stroke="#505050" stroke-width="1.1" />
<line x1="666.0" y1="249.5" x2="672.0" y2="249.5" stroke="#505050" stroke-width="1.1" />
<line x1="666.0" y1="263.4" x2="672.0" y2="263.4" stroke="#505050" stroke-width="1.1" />
<line x1="666.0" y1="277.4" x2="672.0" y2="277.4" stroke="#505050" stroke-width="1.1" />
<line x1="666.0" y1="291.4" x2="672.0" y2="291.4" stroke="#505050" stroke-width="1.1" />
<line x1="666.0" y1="305.3" x2="672.0" y2="305.3" stroke="#505050" stroke-width="1.1" />
<line x1="666.0" y1="319.2" x2="672.0" y2="319.2" stroke="#505050" stroke-width="1.1" />
<line x1="666.0" y1="333.2" x2="672.0" y2="333.2" stroke="#505050" stroke-width="1.1" />
<line x1="666.0" y1="347.1" x2="672.0" y2="347.1" stroke="#505050" stroke-width="1.1" />
<line x1="666.0" y1="361.1" x2="672.0" y2="361.1" stroke="#505050" stroke-width="1.1" />
<line x1="666.0" y1="375.1" x2="672.0" y2="375.1" stroke="#505050" stroke-width="1.1" />
<line x1="666.0" y1="389.0" x2="672.0" y2="389.0" stroke="#505050" stroke-width="1.1" />
<line x1="666.0" y1="402.9" x2="672.0" y2="402.9" stroke="#505050" stroke-width="1.1" />
<line x1="666.0" y1="416.9" x2="672.0" y2="416.9" stroke="#505050" stroke-width="1.1" />
<line x1="666.0" y1="430.9" x2="672.0" y2="430.9" stroke="#505050" stroke-width="1.1" />
<line x1="666.0" y1="444.8" x2="672.0" y2="444.8" stroke="#505050" stroke-width="1.1" />
<line x1="666.0" y1="458.8" x2="672.0" y2="458.8" stroke="#505050" stroke-width="1.1" />
<line x1="666.0" y1="472.7" x2="672.0" y2="472.7" stroke="#505050" stroke-width="1.1" />
<line x1="666.0" y1="486.6" x2="672.0" y2="486.6" stroke="#505050" stroke-width="1.1" />
<line x1="666.0" y1="500.6" x2="672.0" y2="500.6" stroke="#505050" stroke-width="1.1" />
<line x1="666.0" y1="514.5" x2="672.0" y2="514.5" stroke="#505050" stroke-width="1.1" />
<line x1="666.0" y1="528.5" x2="672.0" y2="528.5" stroke="#505050" stroke-width="1.1" />
<line x1="666.0" y1="542.5" x2="672.0" y2="542.5" stroke="#505050" stroke-width="1.1" />
<line x1="666.0" y1="556.4" x2="672.0" y2="556.4" stroke="#505050" stroke-width="1.1" />
<line x1="666.0" y1="570.4" x2="672.0" y2="570.4" stroke="#505050" stroke-width="1.1" />
<line x1="666.0" y1="584.3" x2="672.0" y2="584.3" stroke="#505050" stroke-width="1.1" />
<line x1="666.0" y1="598.2" x2="672.0" y2="598.2" stroke="#505050" stroke-width="1.1" />
<line x1="666.0" y1="612.2" x2="672.0" y2="612.2" stroke="#505050" stroke-width="1.1" />
<line x1="666.0" y1="626.1" x2="672.0" y2="626.1" stroke="#505050" stroke-width="1.1" />
<line x1="666.0" y1="640.1" x2="672.0" y2="640.1" stroke="#505050" stroke-width="1.1" />
<line x1="666.0" y1="654.0" x2="672.0" y2="654.0" stroke="#505050" stroke-width="1.1" />
<rect x="250" y="410.8" width="72" height="5.8" rx="0" fill="#00FFFF" />
<rect x="322" y="410.8" width="17.5" height="5.8" rx="0" fill="#00FFFF" />
<rect x="322" y="416.6" width="17.5" height="2.2" rx="0" fill="#12c4cc" />
<rect x="339.5" y="413.2" width="29.0" height="5.8" rx="0" fill="#00FFFF" />
<rect x="345.5" y="411.5" width="23.0" height="2" rx="0" fill="#00FFFF" />
<rect x="321.5" y="407.5" width="1.5" height="4" rx="0" fill="#00FFFF" />
<rect x="368.5" y="410.8" width="16.899999999999977" height="5.8" rx="0" fill="#00FFFF" />
<rect x="368.5" y="416.6" width="16.899999999999977" height="2.2" rx="0" fill="#12c4cc" />
<rect x="385.4" y="413.2" width="29.600000000000023" height="5.8" rx="0" fill="#00FFFF" />
<rect x="391.4" y="411.5" width="23.600000000000023" height="2" rx="0" fill="#00FFFF" />
<rect x="368.0" y="407.5" width="1.5" height="4" rx="0" fill="#00FFFF" />
<rect x="415" y="410.8" width="17.30000000000001" height="5.8" rx="0" fill="#00FFFF" />
<rect x="415" y="416.6" width="17.30000000000001" height="2.2" rx="0" fill="#12c4cc" />
<rect x="432.3" y="413.2" width="28.69999999999999" height="5.8" rx="0" fill="#00FFFF" />
<rect x="438.3" y="411.5" width="22.69999999999999" height="2" rx="0" fill="#00FFFF" />
<rect x="414.5" y="407.5" width="1.5" height="4" rx="0" fill="#00FFFF" />
<rect x="461" y="410.8" width="35.19999999999999" height="5.8" rx="0" fill="#00FFFF" />
<rect x="461" y="416.6" width="35.19999999999999" height="2.2" rx="0" fill="#12c4cc" />
<rect x="496.2" y="413.2" width="11.400000000000034" height="5.8" rx="0" fill="#00FFFF" />
<rect x="502.2" y="411.5" width="5.400000000000034" height="2" rx="0" fill="#00FFFF" />
<rect x="460.5" y="407.5" width="1.5" height="4" rx="0" fill="#00FFFF" />
<rect x="507.6" y="410.8" width="34.39999999999998" height="5.8" rx="0" fill="#00FFFF" />
<rect x="507.6" y="416.6" width="34.39999999999998" height="2.2" rx="0" fill="#12c4cc" />
<rect x="542" y="413.2" width="12.200000000000045" height="5.8" rx="0" fill="#00FFFF" />
<rect x="548" y="411.5" width="6.2000000000000455" height="2" rx="0" fill="#00FFFF" />
<rect x="507.1" y="407.5" width="1.5" height="4" rx="0" fill="#00FFFF" />
<rect x="554.2" y="410.8" width="34.299999999999955" height="5.8" rx="0" fill="#00FFFF" />
<rect x="554.2" y="416.6" width="34.299999999999955" height="2.2" rx="0" fill="#12c4cc" />
<rect x="588.5" y="413.2" width="12.0" height="5.8" rx="0" fill="#00FFFF" />
<rect x="594.5" y="411.5" width="6.0" height="2" rx="0" fill="#00FFFF" />
<rect x="553.7" y="407.5" width="1.5" height="4" rx="0" fill="#00FFFF" />
<rect x="600.5" y="410.8" width="34.299999999999955" height="5.8" rx="0" fill="#00FFFF" />
<rect x="600.5" y="416.6" width="34.299999999999955" height="2.2" rx="0" fill="#12c4cc" />
<rect x="634.8" y="413.2" width="11.600000000000023" height="5.8" rx="0" fill="#00FFFF" />
<rect x="640.8" y="411.5" width="5.600000000000023" height="2" rx="0" fill="#00FFFF" />
<rect x="600.0" y="407.5" width="1.5" height="4" rx="0" fill="#00FFFF" />
<rect x="646.4" y="410.8" width="35.39999999999998" height="5.8" rx="0" fill="#00FFFF" />
<rect x="646.4" y="416.6" width="35.39999999999998" height="2.2" rx="0" fill="#12c4cc" />
<rect x="681.8" y="413.2" width="10.5" height="5.8" rx="0" fill="#00FFFF" />
<rect x="687.8" y="411.5" width="4.5" height="2" rx="0" fill="#00FFFF" />
<rect x="645.9" y="407.5" width="1.5" height="4" rx="0" fill="#00FFFF" />
<rect x="692.3" y="410.8" width="17.90000000000009" height="5.8" rx="0" fill="#00FFFF" />
<rect x="692.3" y="416.6" width="17.90000000000009" height="2.2" rx="0" fill="#12c4cc" />
<rect x="710.2" y="413.2" width="29.0" height="5.8" rx="0" fill="#00FFFF" />
<rect x="716.2" y="411.5" width="23.0" height="2" rx="0" fill="#00FFFF" />
<rect x="691.8" y="407.5" width="1.5" height="4" rx="0" fill="#00FFFF" />
<rect x="739.2" y="410.8" width="17.5" height="5.8" rx="0" fill="#00FFFF" />
<rect x="739.2" y="416.6" width="17.5" height="2.2" rx="0" fill="#12c4cc" />
<rect x="756.7" y="413.2" width="29.5" height="5.8" rx="0" fill="#00FFFF" />
<rect x="762.7" y="411.5" width="23.5" height="2" rx="0" fill="#00FFFF" />
<rect x="738.7" y="407.5" width="1.5" height="4" rx="0" fill="#00FFFF" />
<rect x="786.2" y="410.8" width="16.0" height="5.8" rx="0" fill="#00FFFF" />
<rect x="786.2" y="416.6" width="16.0" height="2.2" rx="0" fill="#12c4cc" />
<rect x="802.2" y="413.2" width="31.0" height="5.8" rx="0" fill="#00FFFF" />
<rect x="808.2" y="411.5" width="25.0" height="2" rx="0" fill="#00FFFF" />
<rect x="785.7" y="407.5" width="1.5" height="4" rx="0" fill="#00FFFF" />
<rect x="833.2" y="410.8" width="16.199999999999932" height="5.8" rx="0" fill="#00FFFF" />
<rect x="833.2" y="416.6" width="16.199999999999932" height="2.2" rx="0" fill="#12c4cc" />
<rect x="849.4" y="413.2" width="29.600000000000023" height="5.8" rx="0" fill="#00FFFF" />
<rect x="855.4" y="411.5" width="23.600000000000023" height="2" rx="0" fill="#00FFFF" />
<rect x="832.7" y="407.5" width="1.5" height="4" rx="0" fill="#00FFFF" />
<rect x="879" y="410.8" width="34.39999999999998" height="5.8" rx="0" fill="#00FFFF" />
<rect x="879" y="416.6" width="34.39999999999998" height="2.2" rx="0" fill="#12c4cc" />
<rect x="913.4" y="413.2" width="11.300000000000068" height="5.8" rx="0" fill="#00FFFF" />
<rect x="919.4" y="411.5" width="5.300000000000068" height="2" rx="0" fill="#00FFFF" />
<rect x="878.5" y="407.5" width="1.5" height="4" rx="0" fill="#00FFFF" />
<rect x="924.7" y="410.8" width="35.299999999999955" height="5.8" rx="0" fill="#00FFFF" />
<rect x="924.7" y="416.6" width="35.299999999999955" height="2.2" rx="0" fill="#12c4cc" />
<rect x="960" y="413.2" width="11.200000000000045" height="5.8" rx="0" fill="#00FFFF" />
<rect x="966" y="411.5" width="5.2000000000000455" height="2" rx="0" fill="#00FFFF" />
<rect x="924.2" y="407.5" width="1.5" height="4" rx="0" fill="#00FFFF" />
<rect x="971.2" y="410.8" width="35.0" height="5.8" rx="0" fill="#00FFFF" />
<rect x="971.2" y="416.6" width="35.0" height="2.2" rx="0" fill="#12c4cc" />
<rect x="1006.2" y="413.2" width="11.699999999999932" height="5.8" rx="0" fill="#00FFFF" />
<rect x="1012.2" y="411.5" width="5.699999999999932" height="2" rx="0" fill="#00FFFF" />
<rect x="970.7" y="407.5" width="1.5" height="4" rx="0" fill="#00FFFF" />
<rect x="1017.9" y="410.8" width="17.500000000000114" height="5.8" rx="0" fill="#00FFFF" />
<rect x="1017.9" y="416.6" width="17.500000000000114" height="2.2" rx="0" fill="#12c4cc" />
<rect x="1035.4" y="413.2" width="52.59999999999991" height="5.8" rx="0" fill="#00FFFF" />
<rect x="1041.4" y="411.5" width="46.59999999999991" height="2" rx="0" fill="#00FFFF" />
<rect x="1017.4" y="407.5" width="1.5" height="4" rx="0" fill="#00FFFF" />
<rect x="322" y="410.8" width="0" height="0" rx="0" fill="none" />
<rect x="250" y="410.8" width="72" height="5.8" rx="0" fill="#00FFFF" />
<rect x="250" y="416.6" width="72" height="2.2" rx="0" fill="#12c4cc" />
<rect x="250" y="383" width="72" height="5.800000000000011" rx="0" fill="#FFFF00" />
<line x1="321.7" y1="385" x2="321.7" y2="277" stroke="#767600" stroke-width="1.4" />
<rect x="322" y="271.5" width="17.5" height="5.5" rx="0" fill="#FFFF00" />
<rect x="322.5" y="269.0" width="4" height="3" rx="0" fill="#FFFF00" opacity="0.75"/>
<line x1="339.3" y1="276" x2="339.3" y2="388.8" stroke="#767600" stroke-width="1.3" />
<rect x="339.5" y="383" width="29.0" height="5.800000000000011" rx="0" fill="#FFFF00" />
<rect x="339.5" y="388.3" width="6" height="2.5" rx="0" fill="#FFFF00" opacity="0.8"/>
<line x1="368.2" y1="385" x2="368.2" y2="277" stroke="#767600" stroke-width="1.4" />
<rect x="368.5" y="271.5" width="16.899999999999977" height="5.5" rx="0" fill="#FFFF00" />
<rect x="369.0" y="269.0" width="4" height="3" rx="0" fill="#FFFF00" opacity="0.75"/>
<line x1="385.2" y1="276" x2="385.2" y2="388.8" stroke="#767600" stroke-width="1.3" />
<rect x="385.4" y="383" width="29.600000000000023" height="5.800000000000011" rx="0" fill="#FFFF00" />
<rect x="385.4" y="388.3" width="6" height="2.5" rx="0" fill="#FFFF00" opacity="0.8"/>
<line x1="414.7" y1="385" x2="414.7" y2="277" stroke="#767600" stroke-width="1.4" />
<rect x="415" y="271.5" width="17.30000000000001" height="5.5" rx="0" fill="#FFFF00" />
<rect x="415.5" y="269.0" width="4" height="3" rx="0" fill="#FFFF00" opacity="0.75"/>
<line x1="432.1" y1="276" x2="432.1" y2="388.8" stroke="#767600" stroke-width="1.3" />
<rect x="432.3" y="383" width="28.69999999999999" height="5.800000000000011" rx="0" fill="#FFFF00" />
<rect x="432.3" y="388.3" width="6" height="2.5" rx="0" fill="#FFFF00" opacity="0.8"/>
<line x1="460.7" y1="385" x2="460.7" y2="277" stroke="#767600" stroke-width="1.4" />
<rect x="461" y="271.5" width="35.19999999999999" height="5.5" rx="0" fill="#FFFF00" />
<rect x="461.5" y="269.0" width="4" height="3" rx="0" fill="#FFFF00" opacity="0.75"/>
<line x1="496.0" y1="276" x2="496.0" y2="388.8" stroke="#767600" stroke-width="1.3" />
<rect x="496.2" y="383" width="11.400000000000034" height="5.800000000000011" rx="0" fill="#FFFF00" />
<rect x="496.2" y="388.3" width="6" height="2.5" rx="0" fill="#FFFF00" opacity="0.8"/>
<line x1="507.3" y1="385" x2="507.3" y2="277" stroke="#767600" stroke-width="1.4" />
<rect x="507.6" y="271.5" width="34.39999999999998" height="5.5" rx="0" fill="#FFFF00" />
<rect x="508.1" y="269.0" width="4" height="3" rx="0" fill="#FFFF00" opacity="0.75"/>
<line x1="541.8" y1="276" x2="541.8" y2="388.8" stroke="#767600" stroke-width="1.3" />
<rect x="542" y="383" width="12.200000000000045" height="5.800000000000011" rx="0" fill="#FFFF00" />
<rect x="542" y="388.3" width="6" height="2.5" rx="0" fill="#FFFF00" opacity="0.8"/>
<line x1="553.9000000000001" y1="385" x2="553.9000000000001" y2="277" stroke="#767600" stroke-width="1.4" />
<rect x="554.2" y="271.5" width="34.299999999999955" height="5.5" rx="0" fill="#FFFF00" />
<rect x="554.7" y="269.0" width="4" height="3" rx="0" fill="#FFFF00" opacity="0.75"/>
<line x1="588.3" y1="276" x2="588.3" y2="388.8" stroke="#767600" stroke-width="1.3" />
<rect x="588.5" y="383" width="12.0" height="5.800000000000011" rx="0" fill="#FFFF00" />
<rect x="588.5" y="388.3" width="6" height="2.5" rx="0" fill="#FFFF00" opacity="0.8"/>
<line x1="600.2" y1="385" x2="600.2" y2="277" stroke="#767600" stroke-width="1.4" />
<rect x="600.5" y="271.5" width="34.299999999999955" height="5.5" rx="0" fill="#FFFF00" />
<rect x="601.0" y="269.0" width="4" height="3" rx="0" fill="#FFFF00" opacity="0.75"/>
<line x1="634.5999999999999" y1="276" x2="634.5999999999999" y2="388.8" stroke="#767600" stroke-width="1.3" />
<rect x="634.8" y="383" width="11.600000000000023" height="5.800000000000011" rx="0" fill="#FFFF00" />
<rect x="634.8" y="388.3" width="6" height="2.5" rx="0" fill="#FFFF00" opacity="0.8"/>
<line x1="646.1" y1="385" x2="646.1" y2="277" stroke="#767600" stroke-width="1.4" />
<rect x="646.4" y="271.5" width="35.39999999999998" height="5.5" rx="0" fill="#FFFF00" />
<rect x="646.9" y="269.0" width="4" height="3" rx="0" fill="#FFFF00" opacity="0.75"/>
<line x1="681.5999999999999" y1="276" x2="681.5999999999999" y2="388.8" stroke="#767600" stroke-width="1.3" />
<rect x="681.8" y="383" width="10.5" height="5.800000000000011" rx="0" fill="#FFFF00" />
<rect x="681.8" y="388.3" width="6" height="2.5" rx="0" fill="#FFFF00" opacity="0.8"/>
<line x1="692.0" y1="385" x2="692.0" y2="277" stroke="#767600" stroke-width="1.4" />
<rect x="692.3" y="271.5" width="17.90000000000009" height="5.5" rx="0" fill="#FFFF00" />
<rect x="692.8" y="269.0" width="4" height="3" rx="0" fill="#FFFF00" opacity="0.75"/>
<line x1="710.0" y1="276" x2="710.0" y2="388.8" stroke="#767600" stroke-width="1.3" />
<rect x="710.2" y="383" width="29.0" height="5.800000000000011" rx="0" fill="#FFFF00" />
<rect x="710.2" y="388.3" width="6" height="2.5" rx="0" fill="#FFFF00" opacity="0.8"/>
<line x1="738.9000000000001" y1="385" x2="738.9000000000001" y2="277" stroke="#767600" stroke-width="1.4" />
<rect x="739.2" y="271.5" width="17.5" height="5.5" rx="0" fill="#FFFF00" />
<rect x="739.7" y="269.0" width="4" height="3" rx="0" fill="#FFFF00" opacity="0.75"/>
<line x1="756.5" y1="276" x2="756.5" y2="388.8" stroke="#767600" stroke-width="1.3" />
<rect x="756.7" y="383" width="29.5" height="5.800000000000011" rx="0" fill="#FFFF00" />
<rect x="756.7" y="388.3" width="6" height="2.5" rx="0" fill="#FFFF00" opacity="0.8"/>
<line x1="785.9000000000001" y1="385" x2="785.9000000000001" y2="277" stroke="#767600" stroke-width="1.4" />
<rect x="786.2" y="271.5" width="16.0" height="5.5" rx="0" fill="#FFFF00" />
<rect x="786.7" y="269.0" width="4" height="3" rx="0" fill="#FFFF00" opacity="0.75"/>
<line x1="802.0" y1="276" x2="802.0" y2="388.8" stroke="#767600" stroke-width="1.3" />
<rect x="802.2" y="383" width="31.0" height="5.800000000000011" rx="0" fill="#FFFF00" />
<rect x="802.2" y="388.3" width="6" height="2.5" rx="0" fill="#FFFF00" opacity="0.8"/>
<line x1="832.9000000000001" y1="385" x2="832.9000000000001" y2="277" stroke="#767600" stroke-width="1.4" />
<rect x="833.2" y="271.5" width="16.199999999999932" height="5.5" rx="0" fill="#FFFF00" />
<rect x="833.7" y="269.0" width="4" height="3" rx="0" fill="#FFFF00" opacity="0.75"/>
<line x1="849.1999999999999" y1="276" x2="849.1999999999999" y2="388.8" stroke="#767600" stroke-width="1.3" />
<rect x="849.4" y="383" width="29.600000000000023" height="5.800000000000011" rx="0" fill="#FFFF00" />
<rect x="849.4" y="388.3" width="6" height="2.5" rx="0" fill="#FFFF00" opacity="0.8"/>
<line x1="878.7" y1="385" x2="878.7" y2="277" stroke="#767600" stroke-width="1.4" />
<rect x="879" y="271.5" width="34.39999999999998" height="5.5" rx="0" fill="#FFFF00" />
<rect x="879.5" y="269.0" width="4" height="3" rx="0" fill="#FFFF00" opacity="0.75"/>
<line x1="913.1999999999999" y1="276" x2="913.1999999999999" y2="388.8" stroke="#767600" stroke-width="1.3" />
<rect x="913.4" y="383" width="11.300000000000068" height="5.800000000000011" rx="0" fill="#FFFF00" />
<rect x="913.4" y="388.3" width="6" height="2.5" rx="0" fill="#FFFF00" opacity="0.8"/>
<line x1="924.4000000000001" y1="385" x2="924.4000000000001" y2="277" stroke="#767600" stroke-width="1.4" />
<rect x="924.7" y="271.5" width="35.299999999999955" height="5.5" rx="0" fill="#FFFF00" />
<rect x="925.2" y="269.0" width="4" height="3" rx="0" fill="#FFFF00" opacity="0.75"/>
<line x1="959.8" y1="276" x2="959.8" y2="388.8" stroke="#767600" stroke-width="1.3" />
<rect x="960" y="383" width="11.200000000000045" height="5.800000000000011" rx="0" fill="#FFFF00" />
<rect x="960" y="388.3" width="6" height="2.5" rx="0" fill="#FFFF00" opacity="0.8"/>
<line x1="970.9000000000001" y1="385" x2="970.9000000000001" y2="277" stroke="#767600" stroke-width="1.4" />
<rect x="971.2" y="271.5" width="35.0" height="5.5" rx="0" fill="#FFFF00" />
<rect x="971.7" y="269.0" width="4" height="3" rx="0" fill="#FFFF00" opacity="0.75"/>
<line x1="1006.0" y1="276" x2="1006.0" y2="388.8" stroke="#767600" stroke-width="1.3" />
<rect x="1006.2" y="383" width="11.699999999999932" height="5.800000000000011" rx="0" fill="#FFFF00" />
<rect x="1006.2" y="388.3" width="6" height="2.5" rx="0" fill="#FFFF00" opacity="0.8"/>
<line x1="1017.6" y1="385" x2="1017.6" y2="277" stroke="#767600" stroke-width="1.4" />
<rect x="1017.9" y="271.5" width="17.500000000000114" height="5.5" rx="0" fill="#FFFF00" />
<rect x="1018.4" y="269.0" width="4" height="3" rx="0" fill="#FFFF00" opacity="0.75"/>
<line x1="1035.2" y1="276" x2="1035.2" y2="388.8" stroke="#767600" stroke-width="1.3" />
<rect x="1035.4" y="383" width="52.59999999999991" height="5.800000000000011" rx="0" fill="#FFFF00" />
<rect x="1035.4" y="388.3" width="6" height="2.5" rx="0" fill="#FFFF00" opacity="0.8"/>
<path d="M228,383.5 L243,383.5 L249,389.5 L243,395.5 L228,395.5 Z" fill="#FFFF00" />
<text x="233.50" y="393.80" font-family='"Liberation Sans", sans-serif' font-size="11.63" font-weight="bold" fill="#000" textLength="5.50" lengthAdjust="spacingAndGlyphs" >1</text>
<path d="M228,521.5 L243,521.5 L249,528.5 L243,535.5 L228,535.5 Z" fill="#00FFFF" />
<text x="232.50" y="533.00" font-family='"Liberation Sans", sans-serif' font-size="13.08" font-weight="bold" fill="#000" textLength="8.00" lengthAdjust="spacingAndGlyphs" >2</text>
<path d="M316,117.7 Q316,116.7 317,116.7 L328,116.7 Q329,116.7 329,117.7 L329,129.416 L322.5,135.4 L316,129.416 Z" fill="#F58A10" />
<path d="M318.47,120.51 L326.53,120.51 M322.50,120.51 L322.50,131.10" fill="none" stroke="#111" stroke-width="2.08" />
<path d="M662.5,110.5 L676,110.5 L669.2,117.5 Z" fill="#F58A10" />
<path d="M1090,322 L1096,315.7 L1110,315.7 L1110,328.5 L1096,328.5 Z" fill="#F58A10" />
<path d="M1098.5,319 L1106.5,319 M1102.5,319 L1102.5,326" fill="none" stroke="#111" stroke-width="1.6" />
<path d="M321.5,187.7 Q321.5,177.7 325.5,177.7 L828.5,177.7 Q832.5,177.7 832.5,187.7" fill="none" stroke="#e8e8e8" stroke-width="1.2" stroke-dasharray="1.2 1.8"/>
<path d="M832.5,187.7 Q832.5,177.7 836.5,177.7 L874.5,177.7 Q878.5,177.7 878.5,187.7" fill="none" stroke="#e8e8e8" stroke-width="1.2" stroke-dasharray="1.2 1.8"/>
<path d="M878.5,187.7 Q878.5,177.7 882.5,177.7 L1055,177.7 Q1059,177.7 1059,187.7" fill="none" stroke="#e8e8e8" stroke-width="1.2" stroke-dasharray="1.2 1.8"/>
<path d="M574,177.5 Q576,177.5 576,169.75 L576,162" fill="none" stroke="#e8e8e8" stroke-width="1.1" stroke-dasharray="1.2 1.8"/>
<path d="M853.6,177.5 Q855.6,177.5 855.6,169.75 L855.6,162" fill="none" stroke="#e8e8e8" stroke-width="1.1" stroke-dasharray="1.2 1.8"/>
<path d="M966.5,177.5 Q968.5,177.5 968.5,169.75 L968.5,162" fill="none" stroke="#e8e8e8" stroke-width="1.1" stroke-dasharray="1.2 1.8"/>
<line x1="369.4" y1="191" x2="369.4" y2="268" stroke="#e8e8e8" stroke-width="1.3" stroke-dasharray="4.5 3"/>
<line x1="412.3" y1="191" x2="412.3" y2="268" stroke="#e8e8e8" stroke-width="1.3" stroke-dasharray="4.5 3"/>
<line x1="509.8" y1="191" x2="509.8" y2="268" stroke="#e8e8e8" stroke-width="1.3" stroke-dasharray="4.5 3"/>
<line x1="554.8" y1="191" x2="554.8" y2="268" stroke="#e8e8e8" stroke-width="1.3" stroke-dasharray="4.5 3"/>
<line x1="600.6" y1="191" x2="600.6" y2="268" stroke="#e8e8e8" stroke-width="1.3" stroke-dasharray="4.5 3"/>
<line x1="645.9" y1="191" x2="645.9" y2="268" stroke="#e8e8e8" stroke-width="1.3" stroke-dasharray="4.5 3"/>
<line x1="692.6" y1="191" x2="692.6" y2="268" stroke="#e8e8e8" stroke-width="1.3" stroke-dasharray="4.5 3"/>
<line x1="736.9" y1="191" x2="736.9" y2="268" stroke="#e8e8e8" stroke-width="1.3" stroke-dasharray="4.5 3"/>
<line x1="787.1" y1="191" x2="787.1" y2="268" stroke="#e8e8e8" stroke-width="1.3" stroke-dasharray="4.5 3"/>
<line x1="923.5" y1="191" x2="923.5" y2="268" stroke="#e8e8e8" stroke-width="1.3" stroke-dasharray="4.5 3"/>
<line x1="972.8" y1="191" x2="972.8" y2="268" stroke="#e8e8e8" stroke-width="1.3" stroke-dasharray="4.5 3"/>
<line x1="1017.8" y1="191" x2="1017.8" y2="268" stroke="#e8e8e8" stroke-width="1.3" stroke-dasharray="4.5 3"/>
<line x1="321.5" y1="188" x2="321.5" y2="570" stroke="#e8e8e8" stroke-width="1.3" stroke-dasharray="4.5 3"/>
<line x1="461.2" y1="191" x2="461.2" y2="476" stroke="#e8e8e8" stroke-width="1.3" stroke-dasharray="4.5 3"/>
<line x1="641.6" y1="272" x2="641.6" y2="476" stroke="#e8e8e8" stroke-width="1.3" stroke-dasharray="4.5 3"/>
<line x1="645.9" y1="191" x2="645.9" y2="268" stroke="#e8e8e8" stroke-width="1.3" stroke-dasharray="4.5 3"/>
<line x1="832.8" y1="188" x2="832.8" y2="478" stroke="#e8e8e8" stroke-width="1.3" stroke-dasharray="4.5 3"/>
<line x1="878.8" y1="188" x2="878.8" y2="570" stroke="#e8e8e8" stroke-width="1.3" stroke-dasharray="4.5 3"/>
<line x1="1059.2" y1="188" x2="1059.2" y2="476" stroke="#e8e8e8" stroke-width="1.3" stroke-dasharray="4.5 3"/>
<path d="M321.5,480 Q321.5,495 326,495 L828,495 Q832.8,495 832.8,478" fill="none" stroke="#e8e8e8" stroke-width="1.2" stroke-dasharray="1.2 1.8"/>
<path d="M321.5,565 Q321.5,578.3 326,578.3 L874,578.3 Q878.8,578.3 878.8,565" fill="none" stroke="#e8e8e8" stroke-width="1.2" stroke-dasharray="1.2 1.8"/>
<path d="M574.5,495 Q576.7,495 576.7,502 L576.7,510" fill="none" stroke="#e8e8e8" stroke-width="1.1" stroke-dasharray="1.2 1.8"/>
<path d="M597.5,578.3 Q599.5,578.3 599.5,585 L599.5,593" fill="none" stroke="#e8e8e8" stroke-width="1.1" stroke-dasharray="1.2 1.8"/>
<text x="549.50" y="157.00" font-family='"Liberation Sans", sans-serif' font-size="15.99" font-weight="normal" fill="#e8e8e8" textLength="55.50" lengthAdjust="spacingAndGlyphs" stroke="#e8e8e8" stroke-width="0.35" >Throttle</text>
<text x="835.20" y="132.90" font-family='"Liberation Sans", sans-serif' font-size="14.97" font-weight="normal" fill="#e8e8e8" textLength="40.80" lengthAdjust="spacingAndGlyphs" stroke="#e8e8e8" stroke-width="0.35" >Telem</text>
<text x="842.70" y="153.70" font-family='"Liberation Sans", sans-serif' font-size="14.24" font-weight="normal" fill="#e8e8e8" textLength="25.60" lengthAdjust="spacingAndGlyphs" stroke="#e8e8e8" stroke-width="0.35" >Req</text>
<text x="956.00" y="157.80" font-family='"Liberation Sans", sans-serif' font-size="15.26" font-weight="normal" fill="#e8e8e8" textLength="26.50" lengthAdjust="spacingAndGlyphs" stroke="#e8e8e8" stroke-width="0.35" >CRC</text>
<text x="326.40" y="212.20" font-family='"Liberation Sans", sans-serif' font-size="13.66" font-weight="normal" fill="#e8e8e8" textLength="34.20" lengthAdjust="spacingAndGlyphs" stroke="#e8e8e8" stroke-width="0.45" >Bit 10</text>
<text x="378.10" y="212.20" font-family='"Liberation Sans", sans-serif' font-size="13.66" font-weight="normal" fill="#e8e8e8" textLength="26.30" lengthAdjust="spacingAndGlyphs" stroke="#e8e8e8" stroke-width="0.45" >Bit 9</text>
<text x="421.40" y="212.20" font-family='"Liberation Sans", sans-serif' font-size="13.66" font-weight="normal" fill="#e8e8e8" textLength="26.80" lengthAdjust="spacingAndGlyphs" stroke="#e8e8e8" stroke-width="0.45" >Bit 8</text>
<text x="470.60" y="212.20" font-family='"Liberation Sans", sans-serif' font-size="13.66" font-weight="normal" fill="#e8e8e8" textLength="26.20" lengthAdjust="spacingAndGlyphs" stroke="#e8e8e8" stroke-width="0.45" >Bit 7</text>
<text x="518.90" y="212.20" font-family='"Liberation Sans", sans-serif' font-size="13.66" font-weight="normal" fill="#e8e8e8" textLength="26.20" lengthAdjust="spacingAndGlyphs" stroke="#e8e8e8" stroke-width="0.45" >Bit 6</text>
<text x="564.10" y="212.20" font-family='"Liberation Sans", sans-serif' font-size="13.66" font-weight="normal" fill="#e8e8e8" textLength="26.80" lengthAdjust="spacingAndGlyphs" stroke="#e8e8e8" stroke-width="0.45" >Bit 5</text>
<text x="609.90" y="212.20" font-family='"Liberation Sans", sans-serif' font-size="13.66" font-weight="normal" fill="#e8e8e8" textLength="26.30" lengthAdjust="spacingAndGlyphs" stroke="#e8e8e8" stroke-width="0.45" >Bit 4</text>
<text x="654.60" y="212.20" font-family='"Liberation Sans", sans-serif' font-size="13.66" font-weight="normal" fill="#e8e8e8" textLength="26.80" lengthAdjust="spacingAndGlyphs" stroke="#e8e8e8" stroke-width="0.45" >Bit 3</text>
<text x="701.60" y="212.20" font-family='"Liberation Sans", sans-serif' font-size="13.66" font-weight="normal" fill="#e8e8e8" textLength="26.20" lengthAdjust="spacingAndGlyphs" stroke="#e8e8e8" stroke-width="0.45" >Bit 2</text>
<text x="745.70" y="212.20" font-family='"Liberation Sans", sans-serif' font-size="13.66" font-weight="normal" fill="#e8e8e8" textLength="26.20" lengthAdjust="spacingAndGlyphs" stroke="#e8e8e8" stroke-width="0.45" >Bit 1</text>
<text x="796.50" y="212.20" font-family='"Liberation Sans", sans-serif' font-size="13.66" font-weight="normal" fill="#e8e8e8" textLength="26.20" lengthAdjust="spacingAndGlyphs" stroke="#e8e8e8" stroke-width="0.45" >Bit 0</text>
<text x="887.80" y="212.20" font-family='"Liberation Sans", sans-serif' font-size="13.66" font-weight="normal" fill="#e8e8e8" textLength="26.80" lengthAdjust="spacingAndGlyphs" stroke="#e8e8e8" stroke-width="0.45" >Bit 3</text>
<text x="932.30" y="212.20" font-family='"Liberation Sans", sans-serif' font-size="13.66" font-weight="normal" fill="#e8e8e8" textLength="26.40" lengthAdjust="spacingAndGlyphs" stroke="#e8e8e8" stroke-width="0.45" >Bit 5</text>
<text x="981.60" y="212.20" font-family='"Liberation Sans", sans-serif' font-size="13.66" font-weight="normal" fill="#e8e8e8" textLength="26.80" lengthAdjust="spacingAndGlyphs" stroke="#e8e8e8" stroke-width="0.45" >Bit 1</text>
<text x="1026.60" y="212.20" font-family='"Liberation Sans", sans-serif' font-size="13.66" font-weight="normal" fill="#e8e8e8" textLength="26.80" lengthAdjust="spacingAndGlyphs" stroke="#e8e8e8" stroke-width="0.45" >Bit 0</text>
<text x="343.20" y="253.8" font-family='"Liberation Sans", sans-serif' font-size="35.76" font-weight="bold" fill="#c8c8c8" text-anchor="middle">0</text>
<text x="390.55" y="253.8" font-family='"Liberation Sans", sans-serif' font-size="35.76" font-weight="bold" fill="#c8c8c8" text-anchor="middle">0</text>
<text x="435.10" y="253.8" font-family='"Liberation Sans", sans-serif' font-size="35.76" font-weight="bold" fill="#c8c8c8" text-anchor="middle">0</text>
<text x="483.80" y="253.8" font-family='"Liberation Sans", sans-serif' font-size="35.76" font-weight="bold" fill="#c8c8c8" text-anchor="middle">1</text>
<text x="531.90" y="253.8" font-family='"Liberation Sans", sans-serif' font-size="35.76" font-weight="bold" fill="#c8c8c8" text-anchor="middle">1</text>
<text x="577.10" y="253.8" font-family='"Liberation Sans", sans-serif' font-size="35.76" font-weight="bold" fill="#c8c8c8" text-anchor="middle">1</text>
<text x="623.15" y="253.8" font-family='"Liberation Sans", sans-serif' font-size="35.76" font-weight="bold" fill="#c8c8c8" text-anchor="middle">1</text>
<text x="668.40" y="253.8" font-family='"Liberation Sans", sans-serif' font-size="35.76" font-weight="bold" fill="#c8c8c8" text-anchor="middle">1</text>
<text x="714.20" y="253.8" font-family='"Liberation Sans", sans-serif' font-size="35.76" font-weight="bold" fill="#c8c8c8" text-anchor="middle">0</text>
<text x="759.15" y="253.8" font-family='"Liberation Sans", sans-serif' font-size="35.76" font-weight="bold" fill="#c8c8c8" text-anchor="middle">0</text>
<text x="809.50" y="253.8" font-family='"Liberation Sans", sans-serif' font-size="35.76" font-weight="bold" fill="#c8c8c8" text-anchor="middle">0</text>
<text x="854.65" y="253.8" font-family='"Liberation Sans", sans-serif' font-size="35.76" font-weight="bold" fill="#c8c8c8" text-anchor="middle">0</text>
<text x="900.65" y="253.8" font-family='"Liberation Sans", sans-serif' font-size="35.76" font-weight="bold" fill="#c8c8c8" text-anchor="middle">1</text>
<text x="946.70" y="253.8" font-family='"Liberation Sans", sans-serif' font-size="35.76" font-weight="bold" fill="#c8c8c8" text-anchor="middle">1</text>
<text x="994.50" y="253.8" font-family='"Liberation Sans", sans-serif' font-size="35.76" font-weight="bold" fill="#c8c8c8" text-anchor="middle">1</text>
<text x="1039.90" y="253.8" font-family='"Liberation Sans", sans-serif' font-size="35.76" font-weight="bold" fill="#c8c8c8" text-anchor="middle">0</text>
<text x="388.4" y="452" font-family='"Liberation Sans", sans-serif' font-size="15.99" fill="#e8e8e8" text-anchor="middle">0</text>
<text x="550.2" y="452" font-family='"Liberation Sans", sans-serif' font-size="15.99" fill="#e8e8e8" text-anchor="middle">F</text>
<text x="736.2" y="452" font-family='"Liberation Sans", sans-serif' font-size="15.99" fill="#e8e8e8" text-anchor="middle">8</text>
<text x="969.2" y="452" font-family='"Liberation Sans", sans-serif' font-size="15.99" fill="#e8e8e8" text-anchor="middle">E</text>
<text x="475.00" y="528.00" font-family='"Liberation Sans", sans-serif' font-size="16.72" font-weight="normal" fill="#e8e8e8" textLength="201.00" lengthAdjust="spacingAndGlyphs" stroke="#e8e8e8" stroke-width="0.35" >Throttle value = 0x0F8 = 248</text>
<text x="526.00" y="613.20" font-family='"Liberation Sans", sans-serif' font-size="16.72" font-weight="normal" fill="#e8e8e8" textLength="150.00" lengthAdjust="spacingAndGlyphs" stroke="#e8e8e8" stroke-width="0.35" >DSHOT value = 0x1F0</text>
<text x="887.80" y="558.40" font-family='"Liberation Sans", sans-serif' font-size="15.12" font-weight="normal" fill="#e8e8e8" textLength="145.70" lengthAdjust="spacingAndGlyphs" stroke="#e8e8e8" stroke-width="0.35" >Throttle = 0x0F8 = 248</text>
<text x="887.80" y="577.42" font-family='"Liberation Sans", sans-serif' font-size="15.12" font-weight="normal" fill="#e8e8e8" textLength="163.20" lengthAdjust="spacingAndGlyphs" stroke="#e8e8e8" stroke-width="0.35" >Throttle = 248 – 48 = 200</text>
<text x="887.80" y="596.44" font-family='"Liberation Sans", sans-serif' font-size="15.12" font-weight="normal" fill="#e8e8e8" textLength="217.20" lengthAdjust="spacingAndGlyphs" stroke="#e8e8e8" stroke-width="0.35" >Throttle = 200 / Max Pulse Width</text>
<text x="887.80" y="615.46" font-family='"Liberation Sans", sans-serif' font-size="15.12" font-weight="normal" fill="#e8e8e8" textLength="138.70" lengthAdjust="spacingAndGlyphs" stroke="#e8e8e8" stroke-width="0.35" >Throttle = 200 / 2000</text>
<text x="887.80" y="634.48" font-family='"Liberation Sans", sans-serif' font-size="15.12" font-weight="normal" fill="#e8e8e8" textLength="87.20" lengthAdjust="spacingAndGlyphs" stroke="#e8e8e8" stroke-width="0.35" >Throttle = 0.1</text>
<text x="887.80" y="653.50" font-family='"Liberation Sans", sans-serif' font-size="15.12" font-weight="normal" fill="#e8e8e8" textLength="95.20" lengthAdjust="spacingAndGlyphs" stroke="#e8e8e8" stroke-width="0.35" >Throttle = 10%</text>
<path d="M1093.5,109.5 L1249.5,109.5 M1093.5,109.5 L1093.5,218 L1113.5,237.5 L1113.5,667 L1250,667" fill="none" stroke="#4a4a4a" stroke-width="1.3" />
<text x="0" y="0" font-family='"Liberation Sans", sans-serif' font-size="16.5" fill="#f0f0f0" transform="translate(1110,185) rotate(-90)" textLength="37" lengthAdjust="spacingAndGlyphs">Save</text>
<rect x="1117.5" y="114.5" width="122" height="85" rx="4" fill="url(#mbtn)" stroke="url(#mstroke)" stroke-width="1.3" />
<rect x="1121.5" y="141.5" width="114" height="52.5" rx="4" fill="#000" stroke="#6e6e6e" stroke-width="1.4" />
<text x="1156.60" y="180.00" font-family='"Liberation Sans", sans-serif' font-size="23.98" font-weight="normal" fill="#5e5e5e" textLength="49.40" lengthAdjust="spacingAndGlyphs" >Save</text>
<rect x="1117.5" y="205.9" width="122" height="85" rx="4" fill="url(#mbtn)" stroke="url(#mstroke)" stroke-width="1.3" />
<rect x="1121.5" y="232.9" width="114" height="52.5" rx="4" fill="#000" stroke="#6e6e6e" stroke-width="1.4" />
<text x="1139.00" y="272.00" font-family='"Liberation Sans", sans-serif' font-size="23.26" font-weight="normal" fill="#f4f4f4" textLength="82.50" lengthAdjust="spacingAndGlyphs" >New File</text>
<rect x="1117.5" y="299.0" width="122" height="85" rx="4" fill="url(#mbtn)" stroke="url(#mstroke)" stroke-width="1.3" />
<rect x="1121.5" y="326.0" width="114" height="52.5" rx="4" fill="#000" stroke="#6e6e6e" stroke-width="1.4" />
<text x="1128.50" y="364.30" font-family='"Liberation Sans", sans-serif' font-size="23.69" font-weight="normal" fill="#f4f4f4" textLength="105.00" lengthAdjust="spacingAndGlyphs" >NewFolder</text>
<rect x="1117.5" y="390.8" width="122" height="85" rx="4" fill="url(#mbtn)" stroke="url(#mstroke)" stroke-width="1.3" />
<rect x="1121.5" y="417.8" width="114" height="52.5" rx="4" fill="#000" stroke="#6e6e6e" stroke-width="1.4" />
<text x="1149.50" y="456.50" font-family='"Liberation Sans", sans-serif' font-size="22.82" font-weight="normal" fill="#5e5e5e" textLength="63.00" lengthAdjust="spacingAndGlyphs" >Delete</text>
<rect x="1117.5" y="574.5" width="122" height="85" rx="4" fill="url(#mbtn)" stroke="url(#mstroke)" stroke-width="1.3" />
<rect x="1121.5" y="601.5" width="114" height="52.5" rx="4" fill="#000" stroke="#6e6e6e" stroke-width="1.4" />
<circle cx="1201" cy="618" r="4" fill="#19d7ea"/>
<path d="M216.5,688 L216.5,673 Q216.5,668.5 221.5,668.5 L389,668.5 Q394,668.5 394,673 L394,683.5 Q394,688 389,688 Z" fill="#000" stroke="#707070" stroke-width="1.5"/>
<path d="M395,688 L395,673 Q395,668.5 400,668.5 L568,668.5 Q573,668.5 573,673 L573,683.5 Q573,688 568,688 Z" fill="#000" stroke="#707070" stroke-width="1.5"/>
<path d="M574,688 L574,673 Q574,668.5 579,668.5 L747,668.5 Q752,668.5 752,673 L752,683.5 Q752,688 747,688 Z" fill="#000" stroke="#707070" stroke-width="1.5"/>
<path d="M752.5,688 L752.5,673 Q752.5,668.5 757.5,668.5 L925.5,668.5 Q930.5,668.5 930.5,673 L930.5,683.5 Q930.5,688 925.5,688 Z" fill="#000" stroke="#707070" stroke-width="1.5"/>
<path d="M931,688 L931,673 Q931,668.5 936,668.5 L1104.5,668.5 Q1109.5,668.5 1109.5,673 L1109.5,683.5 Q1109.5,688 1104.5,688 Z" fill="#000" stroke="#707070" stroke-width="1.5"/>
<text x="218.00" y="686.00" font-family='"Liberation Sans", sans-serif' font-size="17.44" font-weight="normal" fill="#FFFF00" textLength="101.00" lengthAdjust="spacingAndGlyphs" >Freq=147kHz</text>
<text x="397.00" y="686.00" font-family='"Liberation Sans", sans-serif' font-size="17.44" font-weight="normal" fill="#1E8CFF" textLength="41.50" lengthAdjust="spacingAndGlyphs" >Freq=</text>
<path d="M444.5,677 L444.5,683.5 M441.5,678.6 L447.5,681.9 M447.5,678.6 L441.5,681.9" stroke="#1E8CFF" stroke-width="1.3"/>
<path d="M453.1,677 L453.1,683.5 M450.1,678.6 L456.1,681.9 M456.1,678.6 L450.1,681.9" stroke="#1E8CFF" stroke-width="1.3"/>
<path d="M461.7,677 L461.7,683.5 M458.7,678.6 L464.7,681.9 M464.7,678.6 L458.7,681.9" stroke="#1E8CFF" stroke-width="1.3"/>
<path d="M470.3,677 L470.3,683.5 M467.3,678.6 L473.3,681.9 M473.3,678.6 L467.3,681.9" stroke="#1E8CFF" stroke-width="1.3"/>
<path d="M478.9,677 L478.9,683.5 M475.9,678.6 L481.9,681.9 M481.9,678.6 L475.9,681.9" stroke="#1E8CFF" stroke-width="1.3"/>
<text x="575.50" y="686.00" font-family='"Liberation Sans", sans-serif' font-size="17.44" font-weight="normal" fill="#FFFF00" textLength="96.00" lengthAdjust="spacingAndGlyphs" >Ampl=3.20 V</text>
<text x="754.00" y="686.00" font-family='"Liberation Sans", sans-serif' font-size="17.44" font-weight="normal" fill="#FFFF00" textLength="111.50" lengthAdjust="spacingAndGlyphs" >Vupper=2.92 V</text>
<text x="932.50" y="686.00" font-family='"Liberation Sans", sans-serif' font-size="17.44" font-weight="normal" fill="#FFFF00" textLength="84.50" lengthAdjust="spacingAndGlyphs" >Avg=1.63 V</text>
<path d="M131,690.5 L289,690.5 L272,726 L131,726 Z" fill="url(#hatchY)" stroke="#55550a" stroke-width="1.2" stroke-dasharray="2 1.5"/>
<path d="M173,693 L285.5,693 L270,723.5 L159,723.5 Z" fill="#000"/>
<text x="140.00" y="719.00" font-family='"Liberation Sans", sans-serif' font-size="27.62" font-weight="bold" fill="#FFFF00" textLength="10.50" lengthAdjust="spacingAndGlyphs" >1</text>
<rect x="176.5" y="701.5" width="10.0" height="1.6" rx="0" fill="#FFFF00" />
<rect x="176.8" y="706.0" width="1.3" height="1.4" rx="0" fill="#FFFF00" />
<rect x="179.3" y="706.0" width="1.3" height="1.4" rx="0" fill="#FFFF00" />
<rect x="181.8" y="706.0" width="1.3" height="1.4" rx="0" fill="#FFFF00" />
<rect x="184.3" y="706.0" width="1.3" height="1.4" rx="0" fill="#FFFF00" />
<text x="205.50" y="715.50" font-family='"Liberation Sans", sans-serif' font-size="17.88" font-weight="normal" fill="#FFFF00" textLength="47.00" lengthAdjust="spacingAndGlyphs" >2.00 V</text>
<path d="M294.6,690 L452,690 L434.5,726.3 L277.2,726.3 Z" fill="#00FFFF"/>
<path d="M336.7,693 L447.5,693 L432.3,723.4 L322.2,723.4 Z" fill="#000"/>
<text x="301.50" y="718.80" font-family='"Liberation Sans", sans-serif' font-size="28.34" font-weight="normal" fill="#000" textLength="12.00" lengthAdjust="spacingAndGlyphs" stroke="#000" stroke-width="0.6" >2</text>
<rect x="338" y="701.7" width="11" height="1.6" rx="0" fill="#00FFFF" />
<rect x="338.3" y="706.2" width="1.55" height="1.4" rx="0" fill="#00FFFF" />
<rect x="341.05" y="706.2" width="1.55" height="1.4" rx="0" fill="#00FFFF" />
<rect x="343.8" y="706.2" width="1.55" height="1.4" rx="0" fill="#00FFFF" />
<rect x="346.55" y="706.2" width="1.55" height="1.4" rx="0" fill="#00FFFF" />
<text x="367.50" y="715.30" font-family='"Liberation Sans", sans-serif' font-size="17.44" font-weight="normal" fill="#00FFFF" textLength="46.50" lengthAdjust="spacingAndGlyphs" >2.00 V</text>
<path d="M457.5,690.5 L614.6,690.5 L596,726 L441,726 Z" fill="url(#hatchP)" stroke="#3f1050" stroke-width="1.2" stroke-dasharray="2 1.5"/>
<path d="M500.6,693 L611,693 L595,723.5 L485,723.5 Z" fill="#000"/>
<text x="464.50" y="719.00" font-family='"Liberation Sans", sans-serif' font-size="27.62" font-weight="normal" fill="#8c8c8c" textLength="13.50" lengthAdjust="spacingAndGlyphs" >3</text>
<rect x="500.5" y="701.5" width="9.5" height="1.6" rx="0" fill="#8c8c8c" />
<rect x="500.8" y="706.0" width="1.175" height="1.4" rx="0" fill="#8c8c8c" />
<rect x="503.175" y="706.0" width="1.175" height="1.4" rx="0" fill="#8c8c8c" />
<rect x="505.55" y="706.0" width="1.175" height="1.4" rx="0" fill="#8c8c8c" />
<rect x="507.925" y="706.0" width="1.175" height="1.4" rx="0" fill="#8c8c8c" />
<text x="530.50" y="715.50" font-family='"Liberation Sans", sans-serif' font-size="17.88" font-weight="normal" fill="#8c8c8c" textLength="47.50" lengthAdjust="spacingAndGlyphs" >2.00 V</text>
<path d="M622.6,690.5 L778.6,690.5 L761,726 L605.2,726 Z" fill="url(#hatchB)" stroke="#0f3050" stroke-width="1.2" stroke-dasharray="2 1.5"/>
<path d="M663.2,693 L775,693 L759,723.5 L649.4,723.5 Z" fill="#000"/>
<text x="628.00" y="719.00" font-family='"Liberation Sans", sans-serif' font-size="27.62" font-weight="normal" fill="#8c8c8c" textLength="15.00" lengthAdjust="spacingAndGlyphs" >4</text>
<rect x="664" y="701.5" width="10" height="1.6" rx="0" fill="#8c8c8c" />
<rect x="664.3" y="706.0" width="1.3" height="1.4" rx="0" fill="#8c8c8c" />
<rect x="666.8" y="706.0" width="1.3" height="1.4" rx="0" fill="#8c8c8c" />
<rect x="669.3" y="706.0" width="1.3" height="1.4" rx="0" fill="#8c8c8c" />
<rect x="671.8" y="706.0" width="1.3" height="1.4" rx="0" fill="#8c8c8c" />
<text x="694.00" y="715.50" font-family='"Liberation Sans", sans-serif' font-size="17.88" font-weight="normal" fill="#8c8c8c" textLength="47.50" lengthAdjust="spacingAndGlyphs" >1.00 V</text>
<path d="M786,691 L986,691 L969,725.5 L768.3,725.5 Z" fill="#7a7a7a"/>
<path d="M845,694 L982,694 L966.5,723 L830,723 Z" fill="#000"/>
<text x="790.50" y="718.00" font-family='"Liberation Sans", sans-serif' font-size="27.62" font-weight="bold" fill="#000" textLength="33.00" lengthAdjust="spacingAndGlyphs" >LA</text>
<rect x="847.4" y="694.9" width="11.3" height="11.3" rx="0" fill="#8a8a8a" />
<text x="853.0" y="704.9" font-family='"Liberation Sans", sans-serif' font-size="12" fill="#000" text-anchor="middle" >0</text>
<rect x="861.5" y="694.9" width="11.3" height="11.3" rx="0" fill="#8a8a8a" />
<text x="867.1" y="704.9" font-family='"Liberation Sans", sans-serif' font-size="12" fill="#000" text-anchor="middle" >1</text>
<rect x="875.3" y="694.9" width="11.3" height="11.3" rx="0" fill="#8a8a8a" />
<text x="880.9" y="704.9" font-family='"Liberation Sans", sans-serif' font-size="12" fill="#000" text-anchor="middle" >2</text>
<rect x="888.8" y="694.9" width="11.3" height="11.3" rx="0" fill="#8a8a8a" />
<text x="894.4" y="704.9" font-family='"Liberation Sans", sans-serif' font-size="12" fill="#000" text-anchor="middle" >3</text>
<rect x="909.6" y="694.9" width="11.3" height="11.3" rx="0" fill="#8a8a8a" />
<text x="915.2" y="704.9" font-family='"Liberation Sans", sans-serif' font-size="12" fill="#000" text-anchor="middle" >4</text>
<rect x="923.7" y="694.9" width="11.3" height="11.3" rx="0" fill="#8a8a8a" />
<text x="929.4" y="704.9" font-family='"Liberation Sans", sans-serif' font-size="12" fill="#000" text-anchor="middle" >5</text>
<rect x="937.8" y="694.9" width="11.3" height="11.3" rx="0" fill="#8a8a8a" />
<text x="943.4" y="704.9" font-family='"Liberation Sans", sans-serif' font-size="12" fill="#000" text-anchor="middle" >6</text>
<rect x="952" y="694.9" width="11.3" height="11.3" rx="0" fill="#8a8a8a" />
<text x="957.6" y="704.9" font-family='"Liberation Sans", sans-serif' font-size="12" fill="#000" text-anchor="middle" >7</text>
<rect x="847.4" y="710" width="11.3" height="11.3" rx="0" fill="#8a8a8a" />
<text x="853.0" y="720.0" font-family='"Liberation Sans", sans-serif' font-size="12" fill="#000" text-anchor="middle" >8</text>
<rect x="861.5" y="710" width="11.3" height="11.3" rx="0" fill="#8a8a8a" />
<text x="867.1" y="720.0" font-family='"Liberation Sans", sans-serif' font-size="12" fill="#000" text-anchor="middle" >9</text>
<rect x="875.3" y="710" width="11.3" height="11.3" rx="0" fill="#8a8a8a" />
<text x="880.9" y="720.0" font-family='"Liberation Sans", sans-serif' font-size="12" fill="#000" text-anchor="middle" textLength="10.5" lengthAdjust="spacingAndGlyphs">10</text>
<rect x="888.8" y="710" width="11.3" height="11.3" rx="0" fill="#8a8a8a" />
<text x="894.4" y="720.0" font-family='"Liberation Sans", sans-serif' font-size="12" fill="#000" text-anchor="middle" textLength="10.5" lengthAdjust="spacingAndGlyphs">11</text>
<rect x="909.6" y="710" width="11.3" height="11.3" rx="0" fill="#8a8a8a" />
<text x="915.2" y="720.0" font-family='"Liberation Sans", sans-serif' font-size="12" fill="#000" text-anchor="middle" textLength="10.5" lengthAdjust="spacingAndGlyphs">12</text>
<rect x="923.7" y="710" width="11.3" height="11.3" rx="0" fill="#8a8a8a" />
<text x="929.4" y="720.0" font-family='"Liberation Sans", sans-serif' font-size="12" fill="#000" text-anchor="middle" textLength="10.5" lengthAdjust="spacingAndGlyphs">13</text>
<rect x="937.8" y="710" width="11.3" height="11.3" rx="0" fill="#8a8a8a" />
<text x="943.4" y="720.0" font-family='"Liberation Sans", sans-serif' font-size="12" fill="#000" text-anchor="middle" textLength="10.5" lengthAdjust="spacingAndGlyphs">14</text>
<rect x="952" y="710" width="11.3" height="11.3" rx="0" fill="#8a8a8a" />
<text x="957.6" y="720.0" font-family='"Liberation Sans", sans-serif' font-size="12" fill="#000" text-anchor="middle" textLength="10.5" lengthAdjust="spacingAndGlyphs">15</text>
<path d="M1110,726 L1128.2,690.7 L1249,690.7" fill="none" stroke="#444" stroke-width="1.2" />
<path d="M1167,708 L1192,708 M1172,708 Q1176,701.5 1182,701.5 L1187,701.5 M1172,708 Q1176,714.5 1182,714.5 L1186,714.5" fill="none" stroke="#fff" stroke-width="1.6" />
<path d="M1165,704.5 L1169,708 L1165,711.5 Z" fill="#fff" stroke="#fff" stroke-width="1" />
<circle cx="1188" cy="701.5" r="2" fill="#fff"/><circle cx="1193" cy="708" r="2" fill="#fff"/>
<rect x="1185" y="712.5" width="4" height="4" rx="0" fill="#fff" />
<path d="M1214.5,695 L1214.5,716 L1203,708 L1201,708 L1201,703 L1203,703 Z" fill="none" stroke="#fff" stroke-width="1.5" />
<path d="M1209,700 L1209,711" fill="none" stroke="#fff" stroke-width="1.1" />
<path d="M1218,701.5 L1228,711.5 M1228,701.5 L1218,711.5" fill="none" stroke="#ddd" stroke-width="1.2" />
<rect x="128.5" y="726.5" width="319.5" height="43.5" rx="0" fill="#000" stroke="#3a3a3a" stroke-width="1.2" />
<text x="135.50" y="742.50" font-family='"Liberation Sans", sans-serif' font-size="15.26" font-weight="bold" fill="#FFFF00" textLength="301.50" lengthAdjust="spacingAndGlyphs" >CH1: DSHOT-150 command  (from Pixhawk</text>
<text x="135.50" y="759.20" font-family='"Liberation Sans", sans-serif' font-size="15.26" font-weight="bold" fill="#7FE9F5" textLength="249.00" lengthAdjust="spacingAndGlyphs" >CH2: ESC telemetry (from ADP ESC)</text>
<path d="M1111,511.5 L1265.5,511.5 Q1270,511.5 1270,516 L1270,555 Q1270,559.5 1265.5,559.5 L1111,559.5 Q1106.5,559.5 1106.5,555 L1106.5,552 L1007.6,566 L1106.5,540.7 L1106.5,516 Q1106.5,511.5 1111,511.5 Z" fill="none" stroke="#000" stroke-width="5.5" clip-path="url(#outside)"/>
<path d="M1111,511.5 L1265.5,511.5 Q1270,511.5 1270,516 L1270,555 Q1270,559.5 1265.5,559.5 L1111,559.5 Q1106.5,559.5 1106.5,555 L1106.5,552 L1007.6,566 L1106.5,540.7 L1106.5,516 Q1106.5,511.5 1111,511.5 Z" fill="none" stroke="#48724F" stroke-width="3.2" clip-path="url(#outside)"/>
<path d="M1118.5,618 L1142,618 L1106.5,590.2 L1203,618 L1324,618 Q1328.5,618 1328.5,622.5 L1328.5,640 Q1328.5,644.7 1324,644.7 L1118.5,644.7 Q1114,644.7 1114,640 L1114,622.5 Q1114,618 1118.5,618 Z" fill="none" stroke="#000" stroke-width="5.5" clip-path="url(#outside)"/>
<path d="M1118.5,618 L1142,618 L1106.5,590.2 L1203,618 L1324,618 Q1328.5,618 1328.5,622.5 L1328.5,640 Q1328.5,644.7 1324,644.7 L1118.5,644.7 Q1114,644.7 1114,640 L1114,622.5 Q1114,618 1118.5,618 Z" fill="none" stroke="#48724F" stroke-width="3.2" clip-path="url(#outside)"/>
<path d="M1111,511.5 L1265.5,511.5 Q1270,511.5 1270,516 L1270,555 Q1270,559.5 1265.5,559.5 L1111,559.5 Q1106.5,559.5 1106.5,555 L1106.5,552 L1007.6,566 L1106.5,540.7 L1106.5,516 Q1106.5,511.5 1111,511.5 Z" fill="#FFC000" stroke="#3a2a00" stroke-width="1.2"/>
<text x="1124.50" y="529.80" font-family='"Liberation Sans", sans-serif' font-size="15.99" font-weight="normal" fill="#000" textLength="126.50" lengthAdjust="spacingAndGlyphs" stroke="#000" stroke-width="0.3" >0 to 48 used for</text>
<text x="1113.50" y="552.50" font-family='"Liberation Sans", sans-serif' font-size="15.99" font-weight="normal" fill="#000" textLength="147.50" lengthAdjust="spacingAndGlyphs" stroke="#000" stroke-width="0.3" >special commands</text>
<path d="M1118.5,618 L1142,618 L1106.5,590.2 L1203,618 L1324,618 Q1328.5,618 1328.5,622.5 L1328.5,640 Q1328.5,644.7 1324,644.7 L1118.5,644.7 Q1114,644.7 1114,640 L1114,622.5 Q1114,618 1118.5,618 Z" fill="#FFC000" stroke="#3a2a00" stroke-width="1.2"/>
<text x="1121.00" y="636.50" font-family='"Liberation Sans", sans-serif' font-size="16.72" font-weight="normal" fill="#000" textLength="198.50" lengthAdjust="spacingAndGlyphs" stroke="#000" stroke-width="0.3" >Default of 2,000us (2ms)</text>
</svg>
</body></html>
